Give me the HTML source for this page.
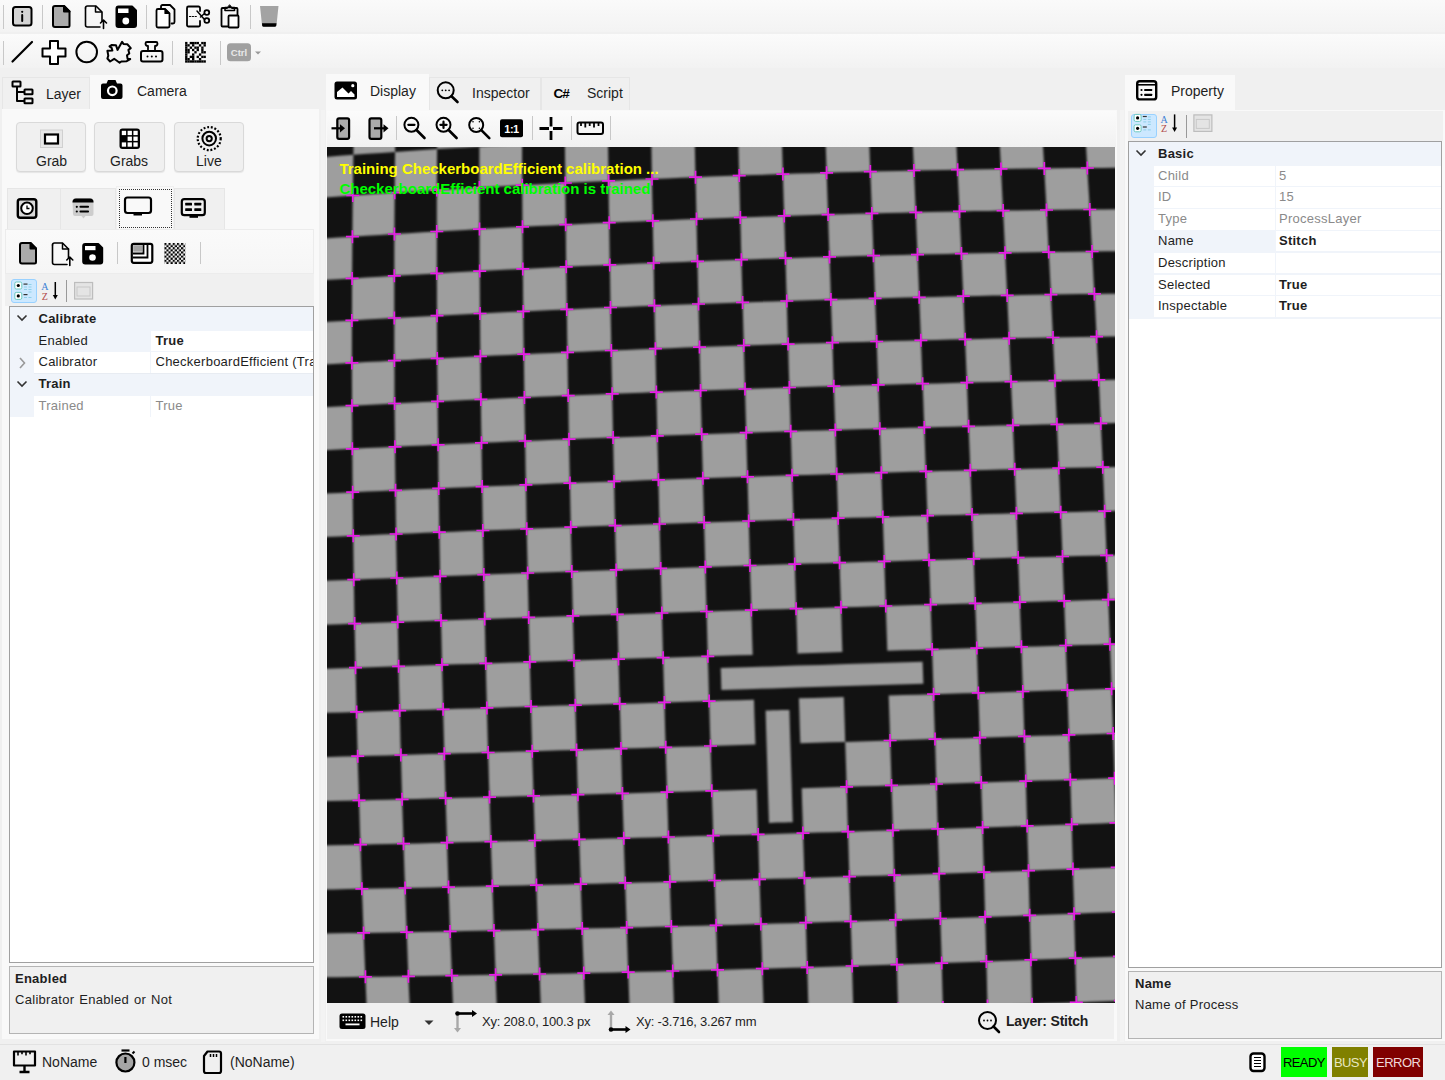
<!DOCTYPE html>
<html><head><meta charset="utf-8">
<style>
*{margin:0;padding:0;box-sizing:border-box}
html,body{width:1445px;height:1080px;overflow:hidden;background:#f0f0f0;font-family:"Liberation Sans",sans-serif;font-size:14px;color:#1e1e1e}
.a{position:absolute}
.t{position:absolute;white-space:nowrap;line-height:16px;height:16px}
.ic{position:absolute;overflow:visible}
.sep{position:absolute;width:1px;background:#c8c8c8}
.tab{position:absolute;background:#f0f0f0;border:1px solid #e6e6e6;border-bottom:none}
.tabsel{position:absolute;background:#f9f9f9;border:1px solid #ececec;border-bottom:none}
.panel{position:absolute;background:#f9f9f9}
.btn{position:absolute;background:#f0f0f0;border:1px solid #d9d9d9;border-radius:4px;box-shadow:0 1px 1px rgba(0,0,0,.08)}
.g{font-size:13px;letter-spacing:0.25px}
.row{position:absolute;left:0;width:303px;height:22px}
</style></head><body>
<!-- top toolbars -->
<div class="a" style="left:0;top:0;width:1445px;height:32px;background:linear-gradient(#fafafa,#f3f3f3)"></div>
<div class="a" style="left:0;top:34px;width:1445px;height:34px;background:linear-gradient(#fbfbfb,#f2f2f2)"></div>
<div class="sep" style="left:3px;top:5px;height:24px"></div>
<div class="sep" style="left:42px;top:5px;height:24px"></div>
<div class="sep" style="left:146px;top:5px;height:24px"></div>
<div class="sep" style="left:250px;top:5px;height:24px"></div>
<div class="sep" style="left:3px;top:41px;height:24px"></div>
<div class="sep" style="left:172px;top:41px;height:24px"></div>
<div class="sep" style="left:220px;top:41px;height:24px"></div>
<!--TOPICONS-->

<!-- left panel -->
<div class="tab" style="left:2px;top:77px;width:88px;height:33px"></div>
<div class="tabsel" style="left:90px;top:75px;width:110px;height:35px;border-color:#f9f9f9"></div>
<div class="panel" style="left:2px;top:109px;width:317px;height:930px"></div>
<div class="t" style="left:46px;top:86px">Layer</div>
<div class="t" style="left:137px;top:83px">Camera</div>
<div class="btn" style="left:16px;top:122px;width:70px;height:50px"></div>
<div class="btn" style="left:94px;top:122px;width:71px;height:50px"></div>
<div class="btn" style="left:174px;top:122px;width:70px;height:50px"></div>
<div class="t" style="left:36px;top:153px">Grab</div>
<div class="t" style="left:110px;top:153px">Grabs</div>
<div class="t" style="left:196px;top:153px">Live</div>
<div class="tab" style="left:7px;top:188px;width:54px;height:42px"></div>
<div class="tab" style="left:60px;top:188px;width:56px;height:42px"></div>
<div class="tabsel" style="left:116px;top:186px;width:58px;height:44px;border-color:#f0f0f0"></div>
<div class="a" style="left:119px;top:189px;width:53px;height:39px;border:1px dotted #333"></div>
<div class="tab" style="left:174px;top:188px;width:51px;height:42px"></div>
<div class="a" style="left:5px;top:229px;width:309px;height:45px;background:linear-gradient(#fafafa,#f6f6f6);border:1px solid #ececec"></div>
<div class="a" style="left:5px;top:274px;width:309px;height:32px;background:#f0f0f0"></div>
<div class="sep" style="left:117px;top:242px;height:22px"></div>
<div class="sep" style="left:200px;top:242px;height:22px"></div>
<div class="sep" style="left:66px;top:280px;height:22px;background:#999"></div>
<div class="a" style="left:11px;top:279px;width:26px;height:24px;background:#cce8ff;border:1px solid #99d1ff;border-radius:3px"></div>
<!-- grid -->
<div class="a" style="left:9px;top:306px;width:305px;height:657px;background:#fff;border:1px solid #a0a0a0;overflow:hidden">
  <div class="a" style="left:0;top:0;width:303px;height:110px;background:#f0f4fa"></div>
  <div class="a" style="left:141px;top:23.5px;width:162px;height:20px;background:#fff"></div>
  <div class="a" style="left:24px;top:45.3px;width:116px;height:20.6px;background:#fff"></div>
  <div class="a" style="left:141px;top:45.3px;width:162px;height:20.6px;background:#fff"></div>
  <div class="a" style="left:24px;top:89px;width:116px;height:20.5px;background:#fff"></div>
  <div class="a" style="left:141px;top:89px;width:162px;height:20.5px;background:#fff"></div>
  <div class="a" style="left:24px;top:66.2px;width:279px;height:1px;background:#e8ecf2"></div>
  <div class="t g" style="left:28.5px;top:3.8px;font-weight:bold">Calibrate</div>
  <div class="t g" style="left:28.5px;top:25.6px">Enabled</div>
  <div class="t g" style="left:145.5px;top:25.6px;font-weight:bold">True</div>
  <div class="t g" style="left:28.5px;top:47.4px">Calibrator</div>
  <div class="t g" style="left:145.5px;top:47.4px;width:157px;overflow:hidden">CheckerboardEfficient (Trained)</div>
  <div class="t g" style="left:28.5px;top:69.2px;font-weight:bold">Train</div>
  <div class="t g" style="left:28.5px;top:91px;color:#8a8a8a">Trained</div>
  <div class="t g" style="left:145.5px;top:91px;color:#8a8a8a">True</div>
  <svg class="ic" style="left:6px;top:6px" width="12" height="10"><path d="M1.5 2.5l4.5 4.5 4.5-4.5" stroke="#333" stroke-width="1.6" fill="none"/></svg>
  <svg class="ic" style="left:6px;top:71.5px" width="12" height="10"><path d="M1.5 2.5l4.5 4.5 4.5-4.5" stroke="#333" stroke-width="1.6" fill="none"/></svg>
  <svg class="ic" style="left:8px;top:49px" width="10" height="14"><path d="M2 2l4.5 5-4.5 5" stroke="#999" stroke-width="1.6" fill="none"/></svg>
</div>
<div class="a" style="left:9px;top:966px;width:305px;height:68px;background:#f0f0f0;border:1px solid #b4b4b4"></div>
<div class="t g" style="left:15px;top:971px;font-weight:bold">Enabled</div>
<div class="t g" style="left:15px;top:992px;letter-spacing:0.3px;word-spacing:1px">Calibrator Enabled or Not</div>

<!-- center panel -->
<div class="tabsel" style="left:326px;top:74px;width:103px;height:36px;border-color:#f9f9f9"></div>
<div class="tab" style="left:429px;top:77px;width:112px;height:33px"></div>
<div class="tab" style="left:541px;top:77px;width:89px;height:33px"></div>
<div class="panel" style="left:326px;top:110px;width:791px;height:931px"></div>
<div class="a" style="left:327px;top:111px;width:789px;height:36px;background:linear-gradient(#fbfbfb,#f1f1f1)"></div>
<div class="t" style="left:370px;top:83px">Display</div>
<div class="t" style="left:472px;top:85px">Inspector</div>
<div class="t" style="left:587px;top:85px">Script</div>
<div class="sep" style="left:396px;top:116px;height:24px"></div>
<div class="sep" style="left:532px;top:116px;height:24px"></div>
<div class="sep" style="left:571px;top:116px;height:24px"></div>
<div class="sep" style="left:610px;top:116px;height:24px"></div>
<div class="a" style="left:327px;top:1003px;width:787px;height:36px;background:#f0f0f0"></div>
<div class="t" style="left:370px;top:1014px">Help</div>
<div class="t g" style="left:482px;top:1014px;letter-spacing:-0.2px">Xy: 208.0, 100.3 px</div>
<div class="t g" style="left:636px;top:1014px;letter-spacing:-0.2px">Xy: -3.716, 3.267 mm</div>
<div class="t" style="left:1006px;top:1013px;font-weight:bold;letter-spacing:-0.2px">Layer: Stitch</div>

<!-- right panel -->
<div class="tabsel" style="left:1125px;top:75px;width:110px;height:35px;border-color:#f9f9f9"></div>
<div class="panel" style="left:1125px;top:110px;width:320px;height:931px"></div>
<div class="t" style="left:1171px;top:83px">Property</div>
<div class="a" style="left:1128px;top:111px;width:315px;height:30px;background:#f0f0f0"></div>
<div class="a" style="left:1131px;top:114px;width:26px;height:24px;background:#cce8ff;border:1px solid #99d1ff;border-radius:3px"></div>
<div class="sep" style="left:1186px;top:115px;height:23px;background:#999"></div>
<div class="a" style="left:1128px;top:141px;width:314px;height:827px;background:#fff;border:1px solid #a0a0a0;overflow:hidden">
  <div class="a" style="left:0;top:0;width:312px;height:177px;background:#f0f4fa"></div>
  <div class="a" style="left:24.5px;top:23.5px;width:121px;height:20.6px;background:#fff"></div>
  <div class="a" style="left:146.5px;top:23.5px;width:166px;height:20.6px;background:#fff"></div>
  <div class="t g" style="left:29px;top:25.6px;color:#8a8a8a">Child</div>
  <div class="t g" style="left:150px;top:25.6px;color:#8a8a8a;">5</div>
  <div class="a" style="left:24.5px;top:45.3px;width:121px;height:20.6px;background:#fff"></div>
  <div class="a" style="left:146.5px;top:45.3px;width:166px;height:20.6px;background:#fff"></div>
  <div class="t g" style="left:29px;top:47.4px;color:#8a8a8a">ID</div>
  <div class="t g" style="left:150px;top:47.4px;color:#8a8a8a;">15</div>
  <div class="a" style="left:24.5px;top:67.1px;width:121px;height:20.6px;background:#fff"></div>
  <div class="a" style="left:146.5px;top:67.1px;width:166px;height:20.6px;background:#fff"></div>
  <div class="t g" style="left:29px;top:69.2px;color:#8a8a8a">Type</div>
  <div class="t g" style="left:150px;top:69.2px;color:#8a8a8a;">ProcessLayer</div>
  <div class="a" style="left:146.5px;top:88.9px;width:166px;height:20.6px;background:#fff"></div>
  <div class="t g" style="left:29px;top:91.0px;color:#1e1e1e">Name</div>
  <div class="t g" style="left:150px;top:91.0px;color:#1e1e1e;font-weight:bold">Stitch</div>
  <div class="a" style="left:24.5px;top:110.7px;width:121px;height:20.6px;background:#fff"></div>
  <div class="a" style="left:146.5px;top:110.7px;width:166px;height:20.6px;background:#fff"></div>
  <div class="t g" style="left:29px;top:112.8px;color:#1e1e1e">Description</div>
  <div class="a" style="left:24.5px;top:132.5px;width:121px;height:20.6px;background:#fff"></div>
  <div class="a" style="left:146.5px;top:132.5px;width:166px;height:20.6px;background:#fff"></div>
  <div class="t g" style="left:29px;top:134.6px;color:#1e1e1e">Selected</div>
  <div class="t g" style="left:150px;top:134.6px;color:#1e1e1e;font-weight:bold">True</div>
  <div class="a" style="left:24.5px;top:154.3px;width:121px;height:20.6px;background:#fff"></div>
  <div class="a" style="left:146.5px;top:154.3px;width:166px;height:20.6px;background:#fff"></div>
  <div class="t g" style="left:29px;top:156.4px;color:#1e1e1e">Inspectable</div>
  <div class="t g" style="left:150px;top:156.4px;color:#1e1e1e;font-weight:bold">True</div>
  <div class="t g" style="left:29px;top:3.8px;font-weight:bold">Basic</div>
  <svg class="ic" style="left:6px;top:6px" width="12" height="10"><path d="M1.5 2.5l4.5 4.5 4.5-4.5" stroke="#333" stroke-width="1.6" fill="none"/></svg>
</div>
<div class="a" style="left:1128px;top:971px;width:314px;height:68px;background:#f0f0f0;border:1px solid #b4b4b4"></div>
<div class="t g" style="left:1135px;top:976px;font-weight:bold">Name</div>
<div class="t g" style="left:1135px;top:997px">Name of Process</div>

<!-- bottom status -->
<div class="a" style="left:0;top:1043.5px;width:1445px;height:1px;background:#e2e2e2"></div>
<div class="a" style="left:1119.5px;top:110px;width:4px;height:932px;background:#f3f3f3"></div>
<div class="a" style="left:321px;top:110px;width:4px;height:932px;background:#f3f3f3"></div>
<div class="t" style="left:42px;top:1054px">NoName</div>
<div class="t" style="left:142px;top:1054px">0 msec</div>
<div class="t" style="left:230px;top:1054px">(NoName)</div>
<div class="a" style="left:1281px;top:1047px;width:46px;height:30px;background:#00ff00"></div>
<div class="a" style="left:1332px;top:1047px;width:36px;height:30px;background:#808000"></div>
<div class="a" style="left:1373px;top:1047px;width:50px;height:30px;background:#800000"></div>
<div class="t g" style="left:1283px;top:1055px;color:#000;letter-spacing:-0.6px">READY</div>
<div class="t g" style="left:1334px;top:1055px;color:#e8e8c0;letter-spacing:-0.6px">BUSY</div>
<div class="t g" style="left:1376px;top:1055px;color:#f0d8d8;letter-spacing:-0.5px">ERROR</div>

<svg width="788" height="856" viewBox="0 0 788 856" style="position:absolute;left:327px;top:147px;display:block">
<defs><filter id="bl" x="-2%" y="-2%" width="104%" height="104%"><feGaussianBlur stdDeviation="0.8"/></filter><clipPath id="cp"><rect width="788" height="856"/></clipPath></defs>
<rect width="788" height="856" fill="#121212"/>
<g filter="url(#bl)" clip-path="url(#cp)">
<g fill="#9e9e9e"><polygon points="-54.5,-25.7 -41.1,-26.9 -27.5,-28.0 -13.9,-29.1 -14.3,-15.8 -14.6,-2.5 -14.9,10.9 -28.5,12.0 -42.1,13.1 -55.7,14.2 -55.3,0.8 -55.0,-12.5"/><polygon points="27.1,-32.3 40.9,-33.4 54.7,-34.4 68.6,-35.4 68.4,-22.0 68.2,-8.6 68.1,4.9 54.1,5.9 40.2,6.8 26.4,7.8 26.6,-5.6 26.9,-19.0"/><polygon points="110.4,-38.3 124.4,-39.2 138.5,-40.1 152.6,-41.0 152.5,-27.5 152.5,-14.0 152.4,-0.5 138.3,0.4 124.2,1.2 110.1,2.1 110.2,-11.4 110.3,-24.9"/><polygon points="195.0,-43.5 209.2,-44.3 223.4,-45.1 237.7,-45.9 237.8,-32.4 237.8,-18.8 237.9,-5.2 223.6,-4.5 209.3,-3.7 195.1,-2.9 195.0,-16.5 195.0,-30.0"/><polygon points="280.6,-48.0 294.9,-48.7 309.3,-49.4 323.6,-50.1 323.8,-36.5 324.0,-22.9 324.3,-9.3 309.8,-8.7 295.4,-8.0 281.0,-7.3 280.9,-21.0 280.7,-34.5"/><polygon points="366.8,-51.9 381.2,-52.5 395.7,-53.0 410.1,-53.6 410.4,-40.0 410.8,-26.4 411.1,-12.8 396.6,-12.2 382.1,-11.7 367.7,-11.1 367.4,-24.8 367.1,-38.4"/><polygon points="453.4,-55.1 467.9,-55.5 482.3,-56.0 496.8,-56.4 497.3,-42.9 497.7,-29.3 498.2,-15.6 483.7,-15.2 469.2,-14.7 454.7,-14.3 454.2,-27.9 453.8,-41.5"/><polygon points="540.1,-57.5 554.6,-57.9 569.0,-58.2 583.4,-58.5 584.0,-45.0 584.6,-31.4 585.2,-17.8 570.7,-17.4 556.2,-17.1 541.7,-16.8 541.2,-30.4 540.7,-44.0"/><polygon points="626.6,-59.3 641.0,-59.5 655.3,-59.7 669.7,-59.9 670.4,-46.4 671.1,-32.9 671.8,-19.3 657.4,-19.1 643.0,-18.8 628.6,-18.6 627.9,-32.2 627.3,-45.8"/><polygon points="712.6,-60.3 726.8,-60.4 741.0,-60.5 755.2,-60.6 756.1,-47.1 757.0,-33.6 757.8,-20.1 743.5,-20.0 729.3,-19.9 714.9,-19.8 714.1,-33.3 713.4,-46.9"/><polygon points="797.7,-60.6 811.8,-60.6 825.8,-60.5 839.8,-60.5 840.8,-47.1 841.8,-33.7 842.8,-20.2 828.7,-20.2 814.6,-20.2 800.5,-20.2 799.5,-33.7 798.6,-47.2"/><polygon points="-14.9,10.9 -1.2,9.9 12.6,8.8 26.4,7.8 26.2,21.3 26.0,34.9 25.8,48.5 11.9,49.5 -1.9,50.5 -15.7,51.5 -15.4,37.9 -15.2,24.4"/><polygon points="68.1,4.9 82.0,4.0 96.0,3.0 110.1,2.1 110.0,15.7 109.9,29.4 109.9,43.1 95.8,43.9 81.7,44.8 67.7,45.7 67.8,32.1 67.9,18.4"/><polygon points="152.4,-0.5 166.6,-1.3 180.8,-2.1 195.1,-2.9 195.1,10.7 195.2,24.4 195.2,38.2 180.9,39.0 166.7,39.8 152.4,40.6 152.4,26.8 152.4,13.1"/><polygon points="237.9,-5.2 252.3,-5.9 266.6,-6.6 281.0,-7.3 281.2,6.4 281.4,20.1 281.6,33.9 267.1,34.6 252.7,35.3 238.3,36.0 238.2,22.2 238.0,8.5"/><polygon points="324.3,-9.3 338.7,-9.9 353.2,-10.5 367.7,-11.1 367.9,2.6 368.2,16.4 368.5,30.2 354.0,30.8 339.5,31.4 325.0,32.0 324.7,18.2 324.5,4.4"/><polygon points="411.1,-12.8 425.6,-13.3 440.1,-13.8 454.7,-14.3 455.1,-0.5 455.5,13.3 455.9,27.1 441.3,27.6 426.8,28.1 412.2,28.6 411.8,14.7 411.5,1.0"/><polygon points="498.2,-15.6 512.7,-16.0 527.2,-16.4 541.7,-16.8 542.3,-3.0 542.8,10.7 543.3,24.6 528.8,24.9 514.2,25.3 499.6,25.8 499.2,11.9 498.7,-1.9"/><polygon points="585.2,-17.8 599.7,-18.1 614.1,-18.3 628.6,-18.6 629.3,-4.9 629.9,8.8 630.6,22.7 616.1,22.9 601.5,23.2 587.0,23.5 586.4,9.7 585.8,-4.1"/><polygon points="671.8,-19.3 686.2,-19.4 700.6,-19.6 714.9,-19.8 715.7,-6.1 716.5,7.6 717.3,21.4 702.9,21.5 688.4,21.7 674.0,21.9 673.3,8.1 672.6,-5.6"/><polygon points="757.8,-20.1 772.1,-20.1 786.3,-20.2 800.5,-20.2 801.4,-6.6 802.3,7.0 803.1,20.7 788.9,20.8 774.6,20.9 760.3,21.0 759.5,7.2 758.7,-6.5"/><polygon points="-56.7,54.6 -43.0,53.5 -29.4,52.5 -15.7,51.5 -15.9,65.1 -16.1,78.8 -16.3,92.5 -30.0,93.5 -43.8,94.5 -57.5,95.5 -57.2,81.8 -56.9,68.1"/><polygon points="25.8,48.5 39.7,47.6 53.7,46.6 67.7,45.7 67.6,59.4 67.5,73.2 67.4,87.0 53.3,87.9 39.3,88.8 25.4,89.7 25.5,75.9 25.6,62.2"/><polygon points="109.9,43.1 124.0,42.2 138.2,41.4 152.4,40.6 152.4,54.3 152.5,68.2 152.5,82.1 138.2,82.9 124.0,83.7 109.8,84.5 109.8,70.6 109.8,56.8"/><polygon points="195.2,38.2 209.6,37.4 223.9,36.7 238.3,36.0 238.4,49.8 238.6,63.7 238.7,77.7 224.3,78.4 209.9,79.1 195.5,79.8 195.4,65.9 195.3,52.0"/><polygon points="281.6,33.9 296.0,33.3 310.5,32.6 325.0,32.0 325.2,45.9 325.5,59.8 325.8,73.8 311.2,74.4 296.7,75.0 282.2,75.7 281.9,61.7 281.7,47.8"/><polygon points="368.5,30.2 383.1,29.6 397.6,29.1 412.2,28.6 412.6,42.5 412.9,56.4 413.3,70.4 398.7,70.9 384.1,71.5 369.5,72.0 369.2,58.0 368.9,44.1"/><polygon points="455.9,27.1 470.5,26.6 485.1,26.2 499.6,25.8 500.1,39.6 500.6,53.6 501.1,67.6 486.4,68.0 471.8,68.5 457.2,68.9 456.7,54.9 456.3,41.0"/><polygon points="543.3,24.6 557.9,24.2 572.5,23.9 587.0,23.5 587.6,37.4 588.2,51.3 588.8,65.3 574.2,65.7 559.6,66.0 544.9,66.4 544.4,52.4 543.9,38.5"/><polygon points="630.6,22.7 645.1,22.4 659.5,22.2 674.0,21.9 674.7,35.8 675.4,49.7 676.1,63.6 661.6,63.9 647.0,64.1 632.5,64.4 631.9,50.4 631.2,36.5"/><polygon points="717.3,21.4 731.6,21.2 746.0,21.1 760.3,21.0 761.1,34.7 762.0,48.6 762.8,62.5 748.4,62.6 734.0,62.8 719.5,63.0 718.8,49.1 718.0,35.2"/><polygon points="803.1,20.7 817.3,20.7 831.5,20.6 845.7,20.6 846.6,34.4 847.5,48.1 848.4,62.0 834.2,62.0 820.0,62.1 805.7,62.1 804.9,48.3 804.0,34.5"/><polygon points="-16.3,92.5 -2.4,91.6 11.4,90.6 25.4,89.7 25.3,103.5 25.2,117.4 25.1,131.4 11.1,132.2 -2.8,133.1 -16.7,134.0 -16.6,120.1 -16.4,106.3"/><polygon points="67.4,87.0 81.5,86.2 95.6,85.3 109.8,84.5 109.8,98.4 109.8,112.4 109.8,126.4 95.6,127.2 81.4,128.0 67.3,128.8 67.3,114.8 67.3,100.9"/><polygon points="152.5,82.1 166.8,81.3 181.1,80.6 195.5,79.8 195.6,93.8 195.7,107.8 195.8,121.9 181.4,122.6 167.0,123.3 152.7,124.1 152.6,110.0 152.6,96.0"/><polygon points="238.7,77.7 253.2,77.0 267.7,76.3 282.2,75.7 282.4,89.7 282.6,103.7 282.8,117.9 268.3,118.5 253.7,119.1 239.2,119.8 239.0,105.7 238.9,91.7"/><polygon points="325.8,73.8 340.3,73.2 354.9,72.6 369.5,72.0 369.8,86.1 370.1,100.2 370.5,114.3 355.8,114.9 341.2,115.4 326.6,116.0 326.3,101.9 326.0,87.8"/><polygon points="413.3,70.4 427.9,69.9 442.5,69.4 457.2,68.9 457.6,83.0 458.0,97.1 458.5,111.2 443.8,111.7 429.1,112.2 414.4,112.7 414.0,98.6 413.7,84.5"/><polygon points="501.1,67.6 515.7,67.2 530.3,66.8 544.9,66.4 545.5,80.4 546.0,94.5 546.5,108.7 531.9,109.1 517.2,109.5 502.5,109.9 502.0,95.8 501.5,81.6"/><polygon points="588.8,65.3 603.4,65.0 617.9,64.7 632.5,64.4 633.1,78.4 633.8,92.5 634.4,106.6 619.8,106.9 605.1,107.2 590.5,107.6 589.9,93.4 589.3,79.4"/><polygon points="676.1,63.6 690.6,63.4 705.1,63.2 719.5,63.0 720.3,77.0 721.0,91.0 721.7,105.1 707.2,105.3 692.7,105.5 678.1,105.8 677.5,91.7 676.8,77.6"/><polygon points="762.8,62.5 777.1,62.4 791.4,62.2 805.7,62.1 806.6,76.1 807.4,90.0 808.3,104.1 793.9,104.2 779.5,104.3 765.1,104.5 764.3,90.4 763.6,76.4"/><polygon points="-58.1,136.8 -44.4,135.9 -30.6,135.0 -16.7,134.0 -16.8,148.0 -16.9,162.0 -17.0,176.0 -30.9,176.8 -44.8,177.7 -58.5,178.6 -58.4,164.6 -58.3,150.7"/><polygon points="25.1,131.4 39.1,130.5 53.2,129.7 67.3,128.8 67.3,142.8 67.3,156.9 67.3,171.0 53.1,171.8 39.0,172.6 24.9,173.4 25.0,159.4 25.0,145.3"/><polygon points="109.8,126.4 124.1,125.6 138.4,124.8 152.7,124.1 152.8,138.2 152.9,152.3 153.0,166.5 138.6,167.2 124.3,167.9 110.0,168.7 109.9,154.5 109.9,140.4"/><polygon points="195.8,121.9 210.3,121.2 224.7,120.5 239.2,119.8 239.4,134.0 239.6,148.1 239.8,162.4 225.3,163.0 210.8,163.7 196.3,164.4 196.1,150.2 196.0,136.0"/><polygon points="282.8,117.9 297.4,117.2 312.0,116.6 326.6,116.0 326.9,130.2 327.1,144.4 327.4,158.7 312.8,159.3 298.2,159.9 283.5,160.5 283.3,146.2 283.1,132.0"/><polygon points="370.5,114.3 385.1,113.8 399.8,113.2 414.4,112.7 414.8,126.9 415.2,141.2 415.6,155.4 400.9,155.9 386.2,156.5 371.5,157.0 371.1,142.7 370.8,128.5"/><polygon points="458.5,111.2 473.1,110.8 487.8,110.3 502.5,109.9 503.0,124.1 503.5,138.3 503.9,152.6 489.2,153.1 474.5,153.5 459.8,154.0 459.3,139.7 458.9,125.4"/><polygon points="546.5,108.7 561.2,108.3 575.9,107.9 590.5,107.6 591.1,121.8 591.7,136.0 592.2,150.3 577.5,150.6 562.8,151.0 548.1,151.4 547.6,137.1 547.1,122.9"/><polygon points="634.4,106.6 649.0,106.3 663.6,106.0 678.1,105.8 678.8,119.9 679.5,134.1 680.2,148.4 665.5,148.6 650.9,148.9 636.3,149.2 635.6,135.0 635.0,120.8"/><polygon points="721.7,105.1 736.2,104.9 750.7,104.7 765.1,104.5 765.9,118.6 766.6,132.7 767.4,146.9 752.9,147.1 738.4,147.3 723.9,147.6 723.2,133.4 722.5,119.2"/><polygon points="808.3,104.1 822.6,103.9 836.9,103.8 851.1,103.8 852.0,117.8 852.8,131.9 853.7,146.0 839.4,146.1 825.1,146.2 810.7,146.4 809.9,132.2 809.1,118.1"/><polygon points="-17.0,176.0 -3.1,175.1 10.9,174.3 24.9,173.4 24.9,187.6 24.9,201.7 24.9,215.9 10.8,216.7 -3.2,217.5 -17.2,218.3 -17.1,204.2 -17.1,190.0"/><polygon points="67.3,171.0 81.5,170.2 95.7,169.5 110.0,168.7 110.0,182.9 110.1,197.1 110.2,211.4 95.9,212.1 81.6,212.9 67.4,213.6 67.3,199.4 67.3,185.2"/><polygon points="153.0,166.5 167.4,165.8 181.8,165.1 196.3,164.4 196.4,178.6 196.6,192.9 196.8,207.2 182.3,207.9 167.8,208.6 153.4,209.3 153.2,195.0 153.1,180.7"/><polygon points="239.8,162.4 254.4,161.7 268.9,161.1 283.5,160.5 283.8,174.8 284.1,189.1 284.3,203.5 269.7,204.1 255.1,204.7 240.5,205.3 240.2,191.0 240.0,176.6"/><polygon points="327.4,158.7 342.1,158.1 356.8,157.6 371.5,157.0 371.8,171.3 372.2,185.7 372.5,200.1 357.8,200.6 343.1,201.2 328.4,201.7 328.0,187.3 327.7,173.0"/><polygon points="415.6,155.4 430.3,154.9 445.0,154.5 459.8,154.0 460.2,168.3 460.6,182.7 461.1,197.1 446.3,197.6 431.5,198.0 416.8,198.5 416.4,184.1 416.0,169.8"/><polygon points="503.9,152.6 518.7,152.2 533.4,151.8 548.1,151.4 548.6,165.7 549.2,180.1 549.7,194.5 534.9,194.9 520.2,195.3 505.4,195.7 504.9,181.3 504.4,167.0"/><polygon points="592.2,150.3 606.9,149.9 621.6,149.6 636.3,149.2 636.9,163.5 637.5,177.9 638.1,192.3 623.4,192.6 608.7,193.0 593.9,193.3 593.4,178.9 592.8,164.6"/><polygon points="680.2,148.4 694.7,148.1 709.3,147.8 723.9,147.6 724.6,161.8 725.3,176.1 726.0,190.5 711.4,190.7 696.7,191.0 682.1,191.3 681.5,177.0 680.8,162.6"/><polygon points="767.4,146.9 781.9,146.7 796.3,146.6 810.7,146.4 811.5,160.6 812.3,174.8 813.0,189.1 798.6,189.3 784.1,189.5 769.6,189.7 768.9,175.4 768.2,161.2"/><polygon points="-58.8,220.8 -45.0,220.0 -31.1,219.1 -17.2,218.3 -17.2,232.5 -17.2,246.7 -17.2,261.0 -31.2,261.7 -45.1,262.5 -59.0,263.3 -58.9,249.1 -58.9,234.9"/><polygon points="24.9,215.9 39.0,215.1 53.2,214.4 67.4,213.6 67.5,227.9 67.5,242.2 67.6,256.5 53.4,257.2 39.2,258.0 25.0,258.7 25.0,244.4 24.9,230.1"/><polygon points="110.2,211.4 124.6,210.7 139.0,210.0 153.4,209.3 153.5,223.6 153.7,238.0 153.9,252.4 139.4,253.1 125.0,253.7 110.6,254.4 110.5,240.0 110.3,225.7"/><polygon points="196.8,207.2 211.3,206.6 225.9,205.9 240.5,205.3 240.7,219.7 240.9,234.1 241.2,248.6 226.6,249.2 212.0,249.8 197.4,250.5 197.2,236.0 197.0,221.6"/><polygon points="284.3,203.5 299.0,202.9 313.7,202.3 328.4,201.7 328.7,216.2 329.0,230.6 329.3,245.1 314.6,245.7 299.9,246.2 285.2,246.8 284.9,232.3 284.6,217.9"/><polygon points="372.5,200.1 387.3,199.6 402.0,199.0 416.8,198.5 417.2,213.0 417.6,227.5 418.0,242.0 403.2,242.5 388.4,243.0 373.6,243.5 373.2,229.0 372.9,214.5"/><polygon points="461.1,197.1 475.8,196.6 490.6,196.2 505.4,195.7 505.9,210.2 506.3,224.7 506.8,239.2 492.0,239.6 477.2,240.1 462.4,240.5 461.9,226.0 461.5,211.5"/><polygon points="549.7,194.5 564.4,194.1 579.2,193.7 593.9,193.3 594.5,207.8 595.0,222.2 595.6,236.7 580.8,237.1 566.0,237.5 551.2,237.9 550.7,223.4 550.2,208.9"/><polygon points="638.1,192.3 652.8,191.9 667.4,191.6 682.1,191.3 682.7,205.7 683.4,220.2 684.0,234.6 669.3,235.0 654.6,235.3 639.9,235.6 639.3,221.1 638.7,206.7"/><polygon points="726.0,190.5 740.5,190.2 755.1,190.0 769.6,189.7 770.3,204.1 771.1,218.5 771.8,232.9 757.2,233.2 742.6,233.4 728.0,233.7 727.3,219.3 726.6,204.9"/><polygon points="813.0,189.1 827.4,188.9 841.8,188.8 856.2,188.6 857.0,202.9 857.8,217.2 858.5,231.6 844.2,231.8 829.7,232.0 815.3,232.2 814.5,217.8 813.8,203.4"/><polygon points="-17.2,261.0 -3.2,260.2 10.9,259.5 25.0,258.7 25.1,273.1 25.2,287.4 25.3,301.8 11.1,302.5 -3.0,303.2 -17.0,304.0 -17.1,289.6 -17.2,275.3"/><polygon points="67.6,256.5 81.9,255.8 96.2,255.1 110.6,254.4 110.7,268.8 110.9,283.3 111.1,297.8 96.7,298.4 82.3,299.1 68.0,299.8 67.9,285.3 67.7,270.9"/><polygon points="153.9,252.4 168.4,251.7 182.9,251.1 197.4,250.5 197.6,264.9 197.9,279.4 198.1,294.0 183.5,294.6 169.0,295.2 154.5,295.8 154.2,281.3 154.0,266.9"/><polygon points="241.2,248.6 255.8,248.0 270.5,247.4 285.2,246.8 285.5,261.3 285.8,275.9 286.1,290.5 271.4,291.0 256.7,291.6 242.0,292.2 241.7,277.6 241.5,263.1"/><polygon points="329.3,245.1 344.1,244.6 358.8,244.0 373.6,243.5 374.0,258.1 374.4,272.6 374.7,287.2 359.9,287.8 345.1,288.3 330.3,288.8 330.0,274.2 329.7,259.7"/><polygon points="418.0,242.0 432.8,241.5 447.6,241.0 462.4,240.5 462.8,255.1 463.3,269.7 463.7,284.3 448.9,284.8 434.0,285.3 419.2,285.7 418.8,271.1 418.4,256.5"/><polygon points="506.8,239.2 521.6,238.7 536.4,238.3 551.2,237.9 551.8,252.5 552.3,267.0 552.8,281.7 537.9,282.1 523.1,282.5 508.3,282.9 507.8,268.3 507.3,253.7"/><polygon points="595.6,236.7 610.4,236.4 625.1,236.0 639.9,235.6 640.5,250.2 641.0,264.7 641.6,279.3 626.8,279.7 612.1,280.1 597.3,280.4 596.7,265.8 596.2,251.3"/><polygon points="684.0,234.6 698.7,234.3 713.4,234.0 728.0,233.7 728.6,248.2 729.3,262.7 729.9,277.3 715.3,277.6 700.6,277.9 685.9,278.3 685.3,263.7 684.6,249.1"/><polygon points="771.8,232.9 786.3,232.7 800.8,232.4 815.3,232.2 816.0,246.6 816.7,261.1 817.5,275.6 802.9,275.9 788.4,276.1 773.8,276.4 773.1,261.9 772.5,247.4"/><polygon points="-58.9,306.2 -45.0,305.4 -31.1,304.7 -17.0,304.0 -17.0,318.3 -16.9,332.8 -16.8,347.2 -30.8,347.9 -44.8,348.6 -58.7,349.3 -58.8,334.9 -58.9,320.5"/><polygon points="25.3,301.8 39.5,301.1 53.7,300.4 68.0,299.8 68.1,314.2 68.3,328.7 68.5,343.3 54.2,343.9 39.9,344.6 25.7,345.2 25.5,330.7 25.4,316.3"/><polygon points="111.1,297.8 125.5,297.1 140.0,296.5 154.5,295.8 154.7,310.4 154.9,325.0 155.1,339.6 140.6,340.2 126.1,340.8 111.7,341.4 111.4,326.8 111.3,312.3"/><polygon points="198.1,294.0 212.7,293.4 227.3,292.8 242.0,292.2 242.3,306.8 242.6,321.4 242.9,336.1 228.2,336.6 213.5,337.2 198.9,337.8 198.6,323.2 198.4,308.6"/><polygon points="286.1,290.5 300.8,289.9 315.6,289.4 330.3,288.8 330.7,303.5 331.1,318.1 331.4,332.8 316.6,333.3 301.8,333.9 287.1,334.4 286.7,319.7 286.4,305.1"/><polygon points="374.7,287.2 389.5,286.7 404.4,286.2 419.2,285.7 419.6,300.4 420.0,315.1 420.5,329.8 405.6,330.3 390.7,330.7 375.9,331.3 375.5,316.6 375.1,301.9"/><polygon points="463.7,284.3 478.6,283.8 493.4,283.4 508.3,282.9 508.7,297.6 509.2,312.3 509.7,327.0 494.8,327.4 479.9,327.9 465.1,328.3 464.6,313.6 464.2,299.0"/><polygon points="552.8,281.7 567.6,281.2 582.4,280.8 597.3,280.4 597.8,295.1 598.3,309.7 598.9,324.4 584.0,324.8 569.2,325.3 554.3,325.7 553.8,311.0 553.3,296.3"/><polygon points="641.6,279.3 656.4,279.0 671.1,278.6 685.9,278.3 686.5,292.9 687.1,307.5 687.7,322.2 672.9,322.5 658.1,322.9 643.3,323.3 642.8,308.6 642.2,293.9"/><polygon points="729.9,277.3 744.6,277.0 759.2,276.7 773.8,276.4 774.5,291.0 775.2,305.5 775.8,320.2 761.2,320.5 746.5,320.8 731.8,321.1 731.2,306.5 730.6,291.9"/><polygon points="817.5,275.6 831.9,275.3 846.4,275.1 860.8,274.9 861.5,289.4 862.3,303.9 863.0,318.5 848.5,318.7 834.1,319.0 819.5,319.3 818.9,304.7 818.2,290.1"/><polygon points="-16.8,347.2 -2.7,346.5 11.5,345.9 25.7,345.2 25.8,359.7 26.0,374.3 26.2,388.8 12.0,389.5 -2.2,390.1 -16.3,390.7 -16.5,376.2 -16.6,361.7"/><polygon points="68.5,343.3 82.8,342.6 97.2,342.0 111.7,341.4 111.9,356.0 112.1,370.6 112.3,385.2 97.9,385.8 83.5,386.4 69.1,387.0 68.9,372.4 68.7,357.8"/><polygon points="155.1,339.6 169.7,339.0 184.3,338.4 198.9,337.8 199.2,352.4 199.4,367.1 199.7,381.8 185.1,382.4 170.5,382.9 155.9,383.5 155.6,368.8 155.4,354.2"/><polygon points="242.9,336.1 257.6,335.5 272.3,334.9 287.1,334.4 287.4,349.1 287.7,363.8 288.1,378.6 273.3,379.1 258.6,379.6 243.8,380.2 243.5,365.4 243.2,350.7"/><polygon points="331.4,332.8 346.2,332.3 361.1,331.8 375.9,331.3 376.3,346.0 376.7,360.7 377.1,375.5 362.2,376.0 347.4,376.5 332.5,377.0 332.1,362.2 331.8,347.5"/><polygon points="420.5,329.8 435.3,329.3 450.2,328.8 465.1,328.3 465.5,343.1 466.0,357.8 466.4,372.6 451.5,373.1 436.6,373.5 421.7,374.0 421.3,359.2 420.9,344.5"/><polygon points="509.7,327.0 524.6,326.5 539.4,326.1 554.3,325.7 554.8,340.4 555.3,355.2 555.8,369.9 540.9,370.4 526.0,370.8 511.1,371.2 510.7,356.5 510.2,341.7"/><polygon points="598.9,324.4 613.7,324.0 628.5,323.7 643.3,323.3 643.9,338.0 644.5,352.7 645.0,367.5 630.2,367.9 615.3,368.3 600.5,368.7 599.9,353.9 599.4,339.2"/><polygon points="687.7,322.2 702.4,321.8 717.1,321.5 731.8,321.1 732.5,335.8 733.1,350.5 733.7,365.2 719.0,365.6 704.2,365.9 689.4,366.3 688.9,351.6 688.3,336.9"/><polygon points="775.8,320.2 790.4,319.9 805.0,319.6 819.5,319.3 820.2,333.9 820.9,348.5 821.5,363.2 807.0,363.5 792.4,363.8 777.7,364.2 777.1,349.5 776.5,334.8"/><polygon points="-58.4,392.6 -44.4,392.0 -30.4,391.3 -16.3,390.7 -16.1,405.2 -16.0,419.8 -15.7,434.4 -29.8,435.0 -43.9,435.6 -57.9,436.1 -58.1,421.6 -58.2,407.1"/><polygon points="26.2,388.8 40.4,388.2 54.7,387.6 69.1,387.0 69.3,401.6 69.6,416.3 69.8,431.0 55.4,431.5 41.1,432.1 26.8,432.7 26.6,418.0 26.4,403.4"/><polygon points="112.3,385.2 126.8,384.7 141.4,384.1 155.9,383.5 156.2,398.2 156.5,412.9 156.8,427.6 142.2,428.2 127.6,428.7 113.1,429.3 112.9,414.6 112.6,399.9"/><polygon points="199.7,381.8 214.4,381.3 229.1,380.7 243.8,380.2 244.1,394.9 244.5,409.7 244.8,424.5 230.1,425.0 215.4,425.5 200.7,426.0 200.4,411.3 200.0,396.5"/><polygon points="288.1,378.6 302.9,378.0 317.7,377.5 332.5,377.0 332.9,391.8 333.3,406.6 333.7,421.4 318.8,421.9 304.0,422.4 289.2,422.9 288.8,408.1 288.4,393.3"/><polygon points="377.1,375.5 392.0,375.0 406.8,374.5 421.7,374.0 422.2,388.8 422.6,403.6 423.0,418.5 408.1,419.0 393.2,419.4 378.3,419.9 377.9,405.1 377.5,390.3"/><polygon points="466.4,372.6 481.3,372.1 496.2,371.7 511.1,371.2 511.6,386.0 512.1,400.9 512.6,415.7 497.6,416.2 482.7,416.6 467.8,417.1 467.3,402.2 466.9,387.4"/><polygon points="555.8,369.9 570.7,369.5 585.6,369.1 600.5,368.7 601.0,383.5 601.5,398.3 602.0,413.1 587.1,413.5 572.2,414.0 557.3,414.4 556.8,399.5 556.3,384.7"/><polygon points="645.0,367.5 659.8,367.1 674.6,366.7 689.4,366.3 690.0,381.1 690.6,395.8 691.1,410.6 676.3,411.0 661.5,411.4 646.7,411.8 646.1,397.0 645.6,382.2"/><polygon points="733.7,365.2 748.4,364.9 763.1,364.5 777.7,364.2 778.4,378.9 779.0,393.6 779.6,408.4 764.9,408.7 750.2,409.1 735.5,409.5 734.9,394.7 734.3,379.9"/><polygon points="821.5,363.2 836.1,362.9 850.6,362.6 865.1,362.3 865.7,376.9 866.4,391.6 867.0,406.3 852.5,406.6 838.0,407.0 823.4,407.3 822.8,392.6 822.2,377.9"/><polygon points="-15.7,434.4 -1.6,433.8 12.6,433.2 26.8,432.7 27.1,447.3 27.3,462.0 27.6,476.6 13.4,477.2 -0.9,477.7 -15.0,478.2 -15.3,463.6 -15.5,449.0"/><polygon points="69.8,431.0 84.2,430.4 98.7,429.8 113.1,429.3 113.4,444.0 113.7,458.7 114.0,473.5 99.5,474.0 85.1,474.5 70.7,475.1 70.4,460.3 70.1,445.6"/><polygon points="156.8,427.6 171.4,427.1 186.0,426.6 200.7,426.0 201.0,440.8 201.4,455.6 201.7,470.4 187.0,470.9 172.4,471.4 157.7,472.0 157.4,457.2 157.1,442.4"/><polygon points="244.8,424.5 259.6,423.9 274.4,423.4 289.2,422.9 289.5,437.7 289.9,452.6 290.3,467.4 275.5,467.9 260.7,468.4 245.9,468.9 245.5,454.1 245.2,439.3"/><polygon points="333.7,421.4 348.5,420.9 363.4,420.4 378.3,419.9 378.7,434.8 379.1,449.6 379.6,464.5 364.6,465.0 349.7,465.5 334.9,466.0 334.5,451.1 334.1,436.2"/><polygon points="423.0,418.5 437.9,418.0 452.9,417.5 467.8,417.1 468.2,431.9 468.7,446.8 469.1,461.7 454.2,462.2 439.3,462.6 424.3,463.1 423.9,448.2 423.4,433.3"/><polygon points="512.6,415.7 527.5,415.3 542.4,414.8 557.3,414.4 557.8,429.2 558.3,444.1 558.8,459.0 543.9,459.4 528.9,459.9 514.0,460.3 513.5,445.5 513.0,430.6"/><polygon points="602.0,413.1 616.9,412.7 631.8,412.3 646.7,411.8 647.2,426.7 647.7,441.5 648.2,456.4 633.4,456.8 618.5,457.3 603.6,457.7 603.1,442.8 602.6,427.9"/><polygon points="691.1,410.6 705.9,410.3 720.7,409.9 735.5,409.5 736.0,424.3 736.6,439.1 737.2,453.9 722.4,454.3 707.6,454.7 692.8,455.2 692.2,440.3 691.7,425.5"/><polygon points="779.6,408.4 794.2,408.0 808.8,407.7 823.4,407.3 824.1,422.0 824.7,436.8 825.3,451.6 810.6,452.0 796.0,452.4 781.3,452.7 780.8,437.9 780.2,423.1"/><polygon points="-57.2,479.8 -43.2,479.3 -29.1,478.8 -15.0,478.2 -14.8,492.9 -14.5,507.5 -14.2,522.2 -28.3,522.7 -42.4,523.2 -56.4,523.7 -56.7,509.0 -57.0,494.4"/><polygon points="27.6,476.6 41.9,476.1 56.3,475.6 70.7,475.1 71.0,489.8 71.3,504.5 71.6,519.3 57.2,519.8 42.8,520.3 28.5,520.7 28.2,506.0 27.9,491.3"/><polygon points="114.0,473.5 128.6,473.0 143.1,472.5 157.7,472.0 158.1,486.7 158.4,501.6 158.8,516.4 144.2,516.9 129.6,517.3 115.0,517.8 114.7,503.0 114.4,488.3"/><polygon points="201.7,470.4 216.4,469.9 231.1,469.4 245.9,468.9 246.3,483.8 246.7,498.6 247.0,513.5 232.3,514.0 217.5,514.5 202.8,514.9 202.4,500.1 202.1,485.3"/><polygon points="290.3,467.4 305.1,466.9 320.0,466.5 334.9,466.0 335.3,480.9 335.7,495.8 336.1,510.7 321.2,511.1 306.3,511.6 291.5,512.1 291.1,497.2 290.7,482.3"/><polygon points="379.6,464.5 394.5,464.1 409.4,463.6 424.3,463.1 424.8,478.0 425.2,492.9 425.7,507.9 410.7,508.3 395.8,508.8 380.8,509.3 380.4,494.3 380.0,479.4"/><polygon points="469.1,461.7 484.1,461.3 499.0,460.8 514.0,460.3 514.5,475.3 514.9,490.2 515.4,505.1 500.4,505.6 485.5,506.0 470.5,506.5 470.1,491.5 469.6,476.6"/><polygon points="558.8,459.0 573.7,458.6 588.7,458.1 603.6,457.7 604.1,472.6 604.6,487.5 605.1,502.4 590.2,502.9 575.2,503.3 560.3,503.8 559.8,488.8 559.3,473.9"/><polygon points="648.2,456.4 663.1,456.0 678.0,455.6 692.8,455.2 693.3,470.0 693.9,484.9 694.4,499.8 679.5,500.2 664.7,500.7 649.8,501.1 649.3,486.2 648.8,471.3"/><polygon points="737.2,453.9 751.9,453.5 766.6,453.1 781.3,452.7 781.9,467.6 782.5,482.4 783.0,497.2 768.3,497.7 753.6,498.1 738.8,498.5 738.3,483.6 737.7,468.8"/><polygon points="825.3,451.6 839.8,451.2 854.4,450.8 868.9,450.5 869.5,465.2 870.1,480.0 870.7,494.8 856.1,495.2 841.6,495.6 827.0,496.0 826.4,481.2 825.8,466.4"/><polygon points="-14.2,522.2 0.0,521.7 14.2,521.2 28.5,520.7 28.9,535.5 29.2,550.2 29.6,564.9 15.3,565.4 1.0,565.8 -13.2,566.3 -13.5,551.6 -13.9,536.9"/><polygon points="71.6,519.3 86.0,518.8 100.5,518.3 115.0,517.8 115.4,532.6 115.8,547.4 116.1,562.3 101.6,562.7 87.1,563.1 72.7,563.6 72.3,548.8 71.9,534.0"/><polygon points="158.8,516.4 173.4,515.9 188.1,515.4 202.8,514.9 203.2,529.8 203.6,544.7 204.0,559.5 189.3,560.0 174.6,560.4 159.9,560.9 159.5,546.1 159.1,531.2"/><polygon points="247.0,513.5 261.8,513.0 276.7,512.6 291.5,512.1 291.9,527.0 292.3,541.9 292.7,556.8 277.9,557.3 263.1,557.7 248.3,558.2 247.8,543.3 247.4,528.4"/><polygon points="336.1,510.7 351.0,510.2 365.9,509.7 380.8,509.3 381.3,524.2 381.7,539.1 382.1,554.1 367.2,554.5 352.3,555.0 337.4,555.4 336.9,540.5 336.5,525.6"/><polygon points="605.1,502.4 620.0,502.0 634.9,501.5 649.8,501.1 650.3,516.0 650.8,530.9 651.3,545.9 636.4,546.3 621.5,546.8 606.6,547.2 606.1,532.3 605.6,517.3"/><polygon points="694.4,499.8 709.2,499.4 724.0,498.9 738.8,498.5 739.3,513.4 739.9,528.3 740.4,543.2 725.6,543.6 710.8,544.1 695.9,544.5 695.4,529.6 694.9,514.7"/><polygon points="783.0,497.2 797.7,496.8 812.4,496.4 827.0,496.0 827.5,510.8 828.1,525.7 828.6,540.5 814.0,541.0 799.3,541.4 784.6,541.8 784.1,527.0 783.6,512.1"/><polygon points="-55.5,567.6 -41.4,567.1 -27.3,566.7 -13.2,566.3 -12.8,581.0 -12.4,595.7 -12.0,610.4 -26.2,610.8 -40.3,611.1 -54.4,611.5 -54.7,596.9 -55.1,582.2"/><polygon points="29.6,564.9 43.9,564.5 58.3,564.0 72.7,563.6 73.1,578.4 73.4,593.2 73.9,608.0 59.4,608.4 45.1,608.8 30.7,609.2 30.3,594.4 29.9,579.7"/><polygon points="116.1,562.3 130.7,561.8 145.3,561.4 159.9,560.9 160.3,575.8 160.7,590.6 161.1,605.5 146.5,605.9 131.9,606.3 117.3,606.7 116.9,591.9 116.5,577.1"/><polygon points="204.0,559.5 218.7,559.1 233.5,558.6 248.3,558.2 248.7,573.1 249.1,588.0 249.5,602.9 234.7,603.3 220.0,603.8 205.2,604.2 204.8,589.3 204.4,574.4"/><polygon points="292.7,556.8 307.6,556.4 322.5,555.9 337.4,555.4 337.8,570.4 338.2,585.3 338.7,600.3 323.8,600.7 308.9,601.2 294.0,601.6 293.6,586.7 293.2,571.7"/><polygon points="382.1,554.1 397.1,553.6 412.0,553.2 427.0,552.7 427.4,567.7 427.9,582.6 428.4,597.6 413.4,598.1 398.4,598.5 383.5,599.0 383.0,584.0 382.6,569.0"/><polygon points="471.9,551.3 486.9,550.9 501.8,550.4 516.8,550.0 517.3,564.9 517.8,579.9 518.2,594.9 503.2,595.3 488.3,595.8 473.3,596.2 472.8,581.3 472.4,566.3"/><polygon points="561.7,548.6 576.7,548.1 591.6,547.7 606.6,547.2 607.0,562.2 607.5,577.1 608.0,592.1 593.1,592.6 578.1,593.0 563.1,593.5 562.7,578.5 562.2,563.6"/><polygon points="651.3,545.9 666.2,545.4 681.1,545.0 695.9,544.5 696.4,559.4 696.9,574.4 697.4,589.3 682.5,589.8 667.7,590.2 652.8,590.7 652.3,575.8 651.8,560.8"/><polygon points="740.4,543.2 755.1,542.7 769.9,542.3 784.6,541.8 785.1,556.7 785.6,571.6 786.1,586.5 771.4,587.0 756.6,587.4 741.9,587.9 741.4,573.0 740.9,558.1"/><polygon points="828.6,540.5 843.2,540.1 857.8,539.6 872.3,539.2 872.9,554.0 873.4,568.8 873.9,583.7 859.3,584.1 844.8,584.6 830.1,585.1 829.6,570.2 829.1,555.4"/><polygon points="-12.0,610.4 2.2,610.0 16.4,609.6 30.7,609.2 31.1,623.9 31.6,638.7 32.0,653.4 17.7,653.8 3.4,654.1 -10.8,654.5 -11.2,639.8 -11.6,625.1"/><polygon points="73.9,608.0 88.3,607.6 102.8,607.1 117.3,606.7 117.8,621.6 118.2,636.4 118.6,651.2 104.1,651.6 89.6,652.0 75.1,652.3 74.7,637.5 74.3,622.8"/><polygon points="161.1,605.5 175.8,605.1 190.5,604.6 205.2,604.2 205.6,619.1 206.1,634.0 206.5,648.9 191.8,649.3 177.1,649.7 162.5,650.1 162.0,635.2 161.6,620.3"/><polygon points="249.5,602.9 264.3,602.5 279.2,602.0 294.0,601.6 294.5,616.5 294.9,631.5 295.4,646.4 280.5,646.8 265.7,647.2 250.9,647.7 250.4,632.7 250.0,617.8"/><polygon points="338.7,600.3 353.6,599.8 368.5,599.4 383.5,599.0 383.9,613.9 384.4,628.9 384.8,643.8 369.9,644.3 355.0,644.7 340.0,645.1 339.6,630.2 339.1,615.2"/><polygon points="518.2,594.9 533.2,594.4 548.2,594.0 563.1,593.5 563.6,608.5 564.1,623.4 564.5,638.4 549.6,638.9 534.6,639.3 519.6,639.8 519.2,624.8 518.7,609.9"/><polygon points="608.0,592.1 622.9,591.6 637.9,591.2 652.8,590.7 653.2,605.7 653.7,620.6 654.2,635.6 639.3,636.1 624.3,636.5 609.4,637.0 608.9,622.0 608.5,607.1"/><polygon points="697.4,589.3 712.2,588.8 727.1,588.4 741.9,587.9 742.4,602.8 742.8,617.7 743.3,632.7 728.5,633.2 713.7,633.6 698.8,634.1 698.4,619.2 697.9,604.3"/><polygon points="786.1,586.5 800.8,586.0 815.5,585.6 830.1,585.1 830.6,599.9 831.1,614.8 831.6,629.7 816.9,630.2 802.3,630.7 787.6,631.2 787.1,616.3 786.6,601.4"/><polygon points="-53.1,655.5 -39.0,655.2 -24.9,654.8 -10.8,654.5 -10.3,669.2 -9.8,683.9 -9.3,698.6 -23.5,698.9 -37.6,699.2 -51.7,699.4 -52.2,684.8 -52.6,670.1"/><polygon points="32.0,653.4 46.3,653.1 60.7,652.7 75.1,652.3 75.6,667.1 76.1,681.9 76.5,696.7 62.1,697.0 47.7,697.3 33.4,697.7 32.9,682.9 32.5,668.2"/><polygon points="118.6,651.2 133.2,650.8 147.8,650.5 162.5,650.1 162.9,664.9 163.4,679.8 163.9,694.6 149.2,695.0 134.6,695.3 120.0,695.7 119.6,680.9 119.1,666.0"/><polygon points="206.5,648.9 221.3,648.5 236.1,648.1 250.9,647.7 251.3,662.6 251.8,677.5 252.2,692.4 237.5,692.8 222.7,693.2 207.9,693.5 207.5,678.7 207.0,663.8"/><polygon points="295.4,646.4 310.2,646.0 325.1,645.6 340.0,645.1 340.5,660.1 341.0,675.0 341.4,690.0 326.5,690.4 311.6,690.8 296.8,691.2 296.3,676.3 295.8,661.4"/><polygon points="384.8,643.8 399.8,643.4 414.8,643.0 429.7,642.5 430.2,657.5 430.6,672.5 431.1,687.4 416.1,687.9 401.2,688.3 386.2,688.7 385.8,673.8 385.3,658.8"/><polygon points="474.7,641.2 489.6,640.7 504.6,640.3 519.6,639.8 520.1,654.8 520.5,669.8 521.0,684.7 506.0,685.2 491.0,685.6 476.0,686.1 475.6,671.1 475.1,656.2"/><polygon points="564.5,638.4 579.5,637.9 594.5,637.5 609.4,637.0 609.9,652.0 610.3,666.9 610.8,681.9 595.8,682.4 580.9,682.8 565.9,683.3 565.5,668.4 565.0,653.4"/><polygon points="654.2,635.6 669.1,635.1 684.0,634.6 698.8,634.1 699.3,649.1 699.7,664.0 700.2,678.9 685.3,679.4 670.4,679.9 655.6,680.4 655.1,665.5 654.6,650.5"/><polygon points="743.3,632.7 758.1,632.2 772.8,631.7 787.6,631.2 788.0,646.1 788.5,661.0 788.9,675.8 774.2,676.4 759.4,676.9 744.7,677.4 744.2,662.5 743.8,647.6"/><polygon points="831.6,629.7 846.2,629.2 860.8,628.7 875.3,628.2 875.8,643.0 876.2,657.8 876.6,672.6 862.1,673.2 847.5,673.7 832.9,674.3 832.5,659.4 832.0,644.5"/><polygon points="-9.3,698.6 4.9,698.3 19.1,698.0 33.4,697.7 33.9,712.4 34.4,727.1 34.9,741.8 20.7,742.1 6.4,742.4 -7.8,742.6 -8.3,727.9 -8.8,713.3"/><polygon points="76.5,696.7 91.0,696.4 105.5,696.0 120.0,695.7 120.5,710.5 121.0,725.3 121.5,740.1 107.0,740.4 92.5,740.7 78.1,741.0 77.5,726.2 77.0,711.5"/><polygon points="163.9,694.6 178.5,694.3 193.2,693.9 207.9,693.5 208.4,708.4 208.9,723.3 209.4,738.1 194.7,738.5 180.0,738.8 165.3,739.1 164.8,724.3 164.3,709.5"/><polygon points="252.2,692.4 267.1,692.0 281.9,691.6 296.8,691.2 297.2,706.1 297.7,721.0 298.2,735.9 283.3,736.3 268.5,736.7 253.7,737.1 253.2,722.2 252.7,707.3"/><polygon points="341.4,690.0 356.4,689.6 371.3,689.1 386.2,688.7 386.7,703.7 387.2,718.6 387.6,733.5 372.7,734.0 357.8,734.4 342.9,734.8 342.4,719.9 341.9,704.9"/><polygon points="431.1,687.4 446.1,687.0 461.1,686.5 476.0,686.1 476.5,701.1 477.0,716.0 477.4,731.0 462.5,731.4 447.5,731.8 432.5,732.3 432.0,717.3 431.6,702.4"/><polygon points="521.0,684.7 536.0,684.3 550.9,683.8 565.9,683.3 566.4,698.3 566.8,713.2 567.3,728.2 552.3,728.7 537.3,729.1 522.4,729.6 521.9,714.6 521.5,699.7"/><polygon points="610.8,681.9 625.7,681.4 640.6,680.9 655.6,680.4 656.0,695.4 656.4,710.3 656.9,725.2 642.0,725.7 627.1,726.2 612.1,726.7 611.7,711.8 611.2,696.8"/><polygon points="700.2,678.9 715.0,678.4 729.9,677.9 744.7,677.4 745.1,692.3 745.5,707.2 745.9,722.1 731.1,722.6 716.3,723.1 701.5,723.7 701.1,708.8 700.6,693.8"/><polygon points="788.9,675.8 803.6,675.3 818.3,674.8 832.9,674.3 833.3,689.1 833.8,703.9 834.2,718.8 819.5,719.3 804.9,719.9 790.2,720.4 789.8,705.6 789.3,690.7"/><polygon points="-50.1,743.3 -36.0,743.1 -21.9,742.8 -7.8,742.6 -7.2,757.3 -6.7,771.9 -6.1,786.5 -20.2,786.7 -34.3,786.9 -48.4,787.1 -49.0,772.5 -49.5,757.9"/><polygon points="34.9,741.8 49.3,741.6 63.7,741.3 78.1,741.0 78.6,755.7 79.1,770.5 79.7,785.2 65.3,785.4 50.9,785.7 36.6,785.9 36.0,771.2 35.5,756.5"/><polygon points="121.5,740.1 136.1,739.8 150.7,739.5 165.3,739.1 165.9,754.0 166.4,768.8 166.9,783.6 152.3,783.8 137.7,784.1 123.1,784.4 122.6,769.7 122.1,754.9"/><polygon points="209.4,738.1 224.1,737.8 238.9,737.4 253.7,737.1 254.2,751.9 254.7,766.8 255.2,781.6 240.4,782.0 225.7,782.3 210.9,782.6 210.4,767.8 209.9,753.0"/><polygon points="298.2,735.9 313.1,735.6 328.0,735.2 342.9,734.8 343.3,749.7 343.8,764.6 344.3,779.5 329.4,779.8 314.6,780.2 299.7,780.6 299.2,765.7 298.7,750.8"/><polygon points="387.6,733.5 402.6,733.1 417.5,732.7 432.5,732.3 433.0,747.2 433.5,762.1 433.9,777.0 419.0,777.5 404.0,777.9 389.1,778.3 388.6,763.4 388.1,748.5"/><polygon points="477.4,731.0 492.4,730.5 507.4,730.1 522.4,729.6 522.8,744.5 523.3,759.5 523.7,774.4 508.7,774.8 493.8,775.3 478.8,775.7 478.4,760.8 477.9,745.9"/><polygon points="567.3,728.2 582.2,727.7 597.2,727.2 612.1,726.7 612.6,741.6 613.0,756.6 613.4,771.5 598.5,772.0 583.5,772.5 568.6,772.9 568.2,758.0 567.7,743.1"/><polygon points="656.9,725.2 671.8,724.7 686.6,724.2 701.5,723.7 701.9,738.6 702.3,753.5 702.7,768.3 687.9,768.9 673.0,769.4 658.1,769.9 657.7,755.0 657.3,740.1"/><polygon points="745.9,722.1 760.7,721.5 775.5,721.0 790.2,720.4 790.6,735.3 791.0,750.1 791.3,765.0 776.6,765.5 761.9,766.1 747.1,766.7 746.8,751.8 746.3,737.0"/><polygon points="834.2,718.8 848.8,718.2 863.3,717.6 877.9,717.1 878.2,731.9 878.6,746.6 879.0,761.4 864.4,762.0 849.9,762.6 835.3,763.2 834.9,748.4 834.6,733.6"/><polygon points="-6.1,786.5 8.1,786.3 22.3,786.1 36.6,785.9 37.2,800.6 37.8,815.2 38.4,829.8 24.1,830.0 9.9,830.2 -4.3,830.3 -4.9,815.7 -5.5,801.1"/><polygon points="79.7,785.2 94.1,784.9 108.6,784.7 123.1,784.4 123.7,799.2 124.3,813.9 124.8,828.6 110.3,828.8 95.9,829.0 81.4,829.3 80.8,814.6 80.3,799.9"/><polygon points="166.9,783.6 181.6,783.3 196.2,782.9 210.9,782.6 211.5,797.4 212.0,812.2 212.6,827.0 197.9,827.3 183.2,827.6 168.6,827.8 168.0,813.1 167.5,798.3"/><polygon points="255.2,781.6 270.0,781.3 284.8,780.9 299.7,780.6 300.2,795.4 300.7,810.3 301.2,825.1 286.4,825.4 271.6,825.8 256.8,826.1 256.3,811.3 255.7,796.5"/><polygon points="344.3,779.5 359.2,779.1 374.1,778.7 389.1,778.3 389.6,793.2 390.0,808.0 390.5,822.9 375.6,823.3 360.7,823.7 345.8,824.0 345.3,809.2 344.8,794.3"/><polygon points="433.9,777.0 448.9,776.6 463.8,776.2 478.8,775.7 479.3,790.6 479.7,805.5 480.2,820.4 465.2,820.8 450.3,821.2 435.3,821.7 434.9,806.8 434.4,791.9"/><polygon points="523.7,774.4 538.7,773.9 553.6,773.4 568.6,772.9 569.0,787.8 569.5,802.7 569.9,817.6 555.0,818.1 540.0,818.5 525.1,819.0 524.6,804.1 524.2,789.3"/><polygon points="613.4,771.5 628.3,771.0 643.2,770.4 658.1,769.9 658.6,784.8 659.0,799.7 659.4,814.5 644.5,815.0 629.6,815.6 614.7,816.1 614.3,801.2 613.8,786.3"/><polygon points="702.7,768.3 717.6,767.8 732.4,767.2 747.1,766.7 747.5,781.5 747.9,796.3 748.3,811.1 733.5,811.7 718.7,812.3 703.9,812.8 703.5,798.0 703.1,783.2"/><polygon points="791.3,765.0 806.0,764.4 820.7,763.8 835.3,763.2 835.7,778.0 836.0,792.8 836.3,807.5 821.7,808.1 807.1,808.7 792.4,809.4 792.1,794.6 791.7,779.8"/><polygon points="-46.5,830.7 -32.5,830.6 -18.4,830.5 -4.3,830.3 -3.6,844.9 -3.0,859.4 -2.3,873.9 -16.4,874.0 -30.5,874.1 -44.5,874.2 -45.2,859.7 -45.8,845.2"/><polygon points="38.4,829.8 52.7,829.7 67.0,829.5 81.4,829.3 82.0,843.9 82.7,858.5 83.3,873.1 68.9,873.3 54.6,873.5 40.3,873.6 39.6,859.0 39.0,844.4"/><polygon points="124.8,828.6 139.4,828.3 154.0,828.1 168.6,827.8 169.1,842.6 169.7,857.3 170.3,871.9 155.7,872.2 141.2,872.4 126.6,872.6 126.0,857.9 125.4,843.3"/><polygon points="212.6,827.0 227.3,826.7 242.0,826.4 256.8,826.1 257.3,840.9 257.9,855.6 258.4,870.4 243.7,870.7 229.0,870.9 214.3,871.2 213.7,856.5 213.1,841.8"/><polygon points="301.2,825.1 316.1,824.8 330.9,824.4 345.8,824.0 346.3,838.9 346.8,853.7 347.4,868.4 332.5,868.8 317.6,869.1 302.8,869.4 302.3,854.7 301.8,839.9"/><polygon points="390.5,822.9 405.5,822.5 420.4,822.1 435.3,821.7 435.8,836.5 436.3,851.3 436.8,866.1 421.8,866.5 406.9,866.9 392.0,867.3 391.5,852.5 391.0,837.7"/><polygon points="480.2,820.4 495.1,819.9 510.1,819.5 525.1,819.0 525.5,833.9 525.9,848.7 526.4,863.5 511.4,864.0 496.5,864.4 481.6,864.9 481.1,850.0 480.7,835.2"/><polygon points="569.9,817.6 584.8,817.1 599.8,816.6 614.7,816.1 615.1,830.9 615.5,845.7 615.9,860.5 601.0,861.0 586.1,861.5 571.2,862.0 570.7,847.2 570.3,832.4"/><polygon points="659.4,814.5 674.2,814.0 689.1,813.4 703.9,812.8 704.3,827.7 704.6,842.4 705.0,857.2 690.2,857.8 675.4,858.3 660.5,858.9 660.1,844.1 659.8,829.3"/><polygon points="748.3,811.1 763.0,810.6 777.7,810.0 792.4,809.4 792.8,824.1 793.1,838.9 793.4,853.6 778.7,854.2 764.0,854.8 749.3,855.4 749.0,840.7 748.6,825.9"/><polygon points="836.3,807.5 850.9,806.9 865.4,806.2 880.0,805.6 880.3,820.3 880.5,835.0 880.8,849.6 866.3,850.3 851.8,851.0 837.3,851.6 837.0,837.0 836.7,822.2"/><polygon points="-2.3,873.9 11.9,873.8 26.1,873.7 40.3,873.6 41.0,888.1 41.6,902.6 42.3,917.1 28.1,917.2 13.9,917.3 -0.2,917.3 -0.9,902.9 -1.6,888.4"/><polygon points="83.3,873.1 97.7,873.0 112.2,872.8 126.6,872.6 127.3,887.2 127.9,901.8 128.5,916.4 114.1,916.5 99.7,916.7 85.3,916.8 84.6,902.3 83.9,887.7"/><polygon points="170.3,871.9 184.9,871.7 199.6,871.5 214.3,871.2 214.8,885.9 215.4,900.6 216.0,915.2 201.4,915.4 186.7,915.6 172.1,915.8 171.5,901.2 170.9,886.6"/><polygon points="258.4,870.4 273.2,870.1 288.0,869.8 302.8,869.4 303.4,884.2 303.9,898.9 304.4,913.6 289.7,913.9 274.9,914.2 260.1,914.4 259.6,899.8 259.0,885.1"/><polygon points="347.4,868.4 362.2,868.1 377.1,867.7 392.0,867.3 392.5,882.1 393.0,896.8 393.5,911.6 378.6,911.9 363.8,912.3 348.9,912.6 348.4,897.9 347.9,883.2"/><polygon points="436.8,866.1 451.7,865.7 466.6,865.3 481.6,864.9 482.0,879.6 482.5,894.4 482.9,909.1 468.0,909.6 453.1,910.0 438.2,910.4 437.7,895.7 437.2,880.9"/><polygon points="526.4,863.5 541.3,863.0 556.2,862.5 571.2,862.0 571.6,876.8 572.0,891.6 572.4,906.3 557.5,906.8 542.6,907.3 527.7,907.8 527.3,893.0 526.8,878.3"/><polygon points="615.9,860.5 630.8,860.0 645.7,859.4 660.5,858.9 660.9,873.7 661.3,888.4 661.6,903.1 646.8,903.7 631.9,904.2 617.1,904.8 616.7,890.0 616.3,875.3"/><polygon points="705.0,857.2 719.8,856.6 734.6,856.0 749.3,855.4 749.7,870.2 750.0,884.9 750.3,899.5 735.6,900.1 720.8,900.8 706.0,901.4 705.7,886.7 705.4,872.0"/><polygon points="793.4,853.6 808.1,852.9 822.7,852.3 837.3,851.6 837.5,866.3 837.8,881.0 838.1,895.6 823.5,896.3 808.9,896.9 794.3,897.6 794.0,882.9 793.7,868.3"/><polygon points="393.7,521.0 418.9,520.2 444.2,519.4 469.4,518.6 494.7,517.9 519.9,517.1 545.2,516.3 570.4,515.6 595.6,514.8 595.7,517.5 595.8,520.3 595.9,523.0 596.0,525.8 596.1,528.5 596.2,531.3 596.3,534.0 596.4,536.8 571.1,537.5 545.9,538.3 520.6,539.1 495.4,539.8 470.1,540.6 444.9,541.4 419.6,542.2 394.4,542.9 394.3,540.2 394.2,537.4 394.1,534.7 394.1,531.9 394.0,529.2 393.9,526.5 393.8,523.7"/><polygon points="438.6,563.6 442.5,563.5 446.5,563.3 450.5,563.2 454.4,563.1 458.4,563.0 462.4,562.9 462.9,581.6 463.5,600.3 464.1,619.0 464.7,637.7 465.2,656.5 465.8,675.2 461.8,675.3 457.9,675.4 453.9,675.5 449.9,675.6 446.0,675.8 442.0,675.9 441.4,657.2 440.8,638.4 440.3,619.7 439.7,601.0 439.1,582.3"/></g></g>
<path d="M19.3 48.5h13M25.8 42.0v13M61.2 45.7h13M67.7 39.2v13M103.4 43.1h13M109.9 36.6v13M145.9 40.6h13M152.4 34.1v13M188.7 38.2h13M195.2 31.7v13M231.8 36.0h13M238.3 29.5v13M275.1 33.9h13M281.6 27.4v13M318.5 32.0h13M325.0 25.5v13M362.0 30.2h13M368.5 23.7v13M405.7 28.6h13M412.2 22.1v13M449.4 27.1h13M455.9 20.6v13M493.1 25.8h13M499.6 19.3v13M536.8 24.6h13M543.3 18.1v13M580.5 23.5h13M587.0 17.0v13M624.1 22.7h13M630.6 16.2v13M667.5 21.9h13M674.0 15.4v13M710.8 21.4h13M717.3 14.9v13M753.8 21.0h13M760.3 14.5v13M18.9 89.7h13M25.4 83.2v13M60.9 87.0h13M67.4 80.5v13M103.3 84.5h13M109.8 78.0v13M146.0 82.1h13M152.5 75.6v13M189.0 79.8h13M195.5 73.3v13M232.2 77.7h13M238.7 71.2v13M275.7 75.7h13M282.2 69.2v13M319.3 73.8h13M325.8 67.3v13M363.0 72.0h13M369.5 65.5v13M406.8 70.4h13M413.3 63.9v13M450.7 68.9h13M457.2 62.4v13M494.6 67.6h13M501.1 61.1v13M538.4 66.4h13M544.9 59.9v13M582.3 65.3h13M588.8 58.8v13M626.0 64.4h13M632.5 57.9v13M669.6 63.6h13M676.1 57.1v13M713.0 63.0h13M719.5 56.5v13M756.3 62.5h13M762.8 56.0v13M18.6 131.4h13M25.1 124.9v13M60.8 128.8h13M67.3 122.3v13M103.3 126.4h13M109.8 119.9v13M146.2 124.1h13M152.7 117.6v13M189.3 121.9h13M195.8 115.4v13M232.7 119.8h13M239.2 113.3v13M276.3 117.9h13M282.8 111.4v13M320.1 116.0h13M326.6 109.5v13M364.0 114.3h13M370.5 107.8v13M407.9 112.7h13M414.4 106.2v13M452.0 111.2h13M458.5 104.7v13M496.0 109.9h13M502.5 103.4v13M540.0 108.7h13M546.5 102.2v13M584.0 107.6h13M590.5 101.1v13M627.9 106.6h13M634.4 100.1v13M671.6 105.8h13M678.1 99.3v13M715.2 105.1h13M721.7 98.6v13M758.6 104.5h13M765.1 98.0v13M18.4 173.4h13M24.9 166.9v13M60.8 171.0h13M67.3 164.5v13M103.5 168.7h13M110.0 162.2v13M146.5 166.5h13M153.0 160.0v13M189.8 164.4h13M196.3 157.9v13M233.3 162.4h13M239.8 155.9v13M277.0 160.5h13M283.5 154.0v13M320.9 158.7h13M327.4 152.2v13M365.0 157.0h13M371.5 150.5v13M409.1 155.4h13M415.6 148.9v13M453.3 154.0h13M459.8 147.5v13M497.4 152.6h13M503.9 146.1v13M541.6 151.4h13M548.1 144.9v13M585.7 150.3h13M592.2 143.8v13M629.8 149.2h13M636.3 142.7v13M673.7 148.4h13M680.2 141.9v13M717.4 147.6h13M723.9 141.1v13M760.9 146.9h13M767.4 140.4v13M18.4 215.9h13M24.9 209.4v13M60.9 213.6h13M67.4 207.1v13M103.7 211.4h13M110.2 204.9v13M146.9 209.3h13M153.4 202.8v13M190.3 207.2h13M196.8 200.7v13M234.0 205.3h13M240.5 198.8v13M277.8 203.5h13M284.3 197.0v13M321.9 201.7h13M328.4 195.2v13M366.0 200.1h13M372.5 193.6v13M410.3 198.5h13M416.8 192.0v13M454.6 197.1h13M461.1 190.6v13M498.9 195.7h13M505.4 189.2v13M543.2 194.5h13M549.7 188.0v13M587.4 193.3h13M593.9 186.8v13M631.6 192.3h13M638.1 185.8v13M675.6 191.3h13M682.1 184.8v13M719.5 190.5h13M726.0 184.0v13M763.1 189.7h13M769.6 183.2v13M18.5 258.7h13M25.0 252.2v13M61.1 256.5h13M67.6 250.0v13M104.1 254.4h13M110.6 247.9v13M147.4 252.4h13M153.9 245.9v13M190.9 250.5h13M197.4 244.0v13M234.7 248.6h13M241.2 242.1v13M278.7 246.8h13M285.2 240.3v13M322.8 245.1h13M329.3 238.6v13M367.1 243.5h13M373.6 237.0v13M411.5 242.0h13M418.0 235.5v13M455.9 240.5h13M462.4 234.0v13M500.3 239.2h13M506.8 232.7v13M544.7 237.9h13M551.2 231.4v13M589.1 236.7h13M595.6 230.2v13M633.4 235.6h13M639.9 229.1v13M677.5 234.6h13M684.0 228.1v13M721.5 233.7h13M728.0 227.2v13M765.3 232.9h13M771.8 226.4v13M18.8 301.8h13M25.3 295.3v13M61.5 299.8h13M68.0 293.3v13M104.6 297.8h13M111.1 291.3v13M148.0 295.8h13M154.5 289.3v13M191.6 294.0h13M198.1 287.5v13M235.5 292.2h13M242.0 285.7v13M279.6 290.5h13M286.1 284.0v13M323.8 288.8h13M330.3 282.3v13M368.2 287.2h13M374.7 280.7v13M412.7 285.7h13M419.2 279.2v13M457.2 284.3h13M463.7 277.8v13M501.8 282.9h13M508.3 276.4v13M546.3 281.7h13M552.8 275.2v13M590.8 280.4h13M597.3 273.9v13M635.1 279.3h13M641.6 272.8v13M679.4 278.3h13M685.9 271.8v13M723.4 277.3h13M729.9 270.8v13M767.3 276.4h13M773.8 269.9v13M19.2 345.2h13M25.7 338.7v13M62.0 343.3h13M68.5 336.8v13M105.2 341.4h13M111.7 334.9v13M148.6 339.6h13M155.1 333.1v13M192.4 337.8h13M198.9 331.3v13M236.4 336.1h13M242.9 329.6v13M280.6 334.4h13M287.1 327.9v13M324.9 332.8h13M331.4 326.3v13M369.4 331.3h13M375.9 324.8v13M414.0 329.8h13M420.5 323.3v13M458.6 328.3h13M465.1 321.8v13M503.2 327.0h13M509.7 320.5v13M547.8 325.7h13M554.3 319.2v13M592.4 324.4h13M598.9 317.9v13M636.8 323.3h13M643.3 316.8v13M681.2 322.2h13M687.7 315.7v13M725.3 321.1h13M731.8 314.6v13M769.3 320.2h13M775.8 313.7v13M19.7 388.8h13M26.2 382.3v13M62.6 387.0h13M69.1 380.5v13M105.8 385.2h13M112.3 378.7v13M149.4 383.5h13M155.9 377.0v13M193.2 381.8h13M199.7 375.3v13M237.3 380.2h13M243.8 373.7v13M281.6 378.6h13M288.1 372.1v13M326.0 377.0h13M332.5 370.5v13M370.6 375.5h13M377.1 369.0v13M415.2 374.0h13M421.7 367.5v13M459.9 372.6h13M466.4 366.1v13M504.6 371.2h13M511.1 364.7v13M549.3 369.9h13M555.8 363.4v13M594.0 368.7h13M600.5 362.2v13M638.5 367.5h13M645.0 361.0v13M682.9 366.3h13M689.4 359.8v13M727.2 365.2h13M733.7 358.7v13M771.2 364.2h13M777.7 357.7v13M20.3 432.7h13M26.8 426.2v13M63.3 431.0h13M69.8 424.5v13M106.6 429.3h13M113.1 422.8v13M150.3 427.6h13M156.8 421.1v13M194.2 426.0h13M200.7 419.5v13M238.3 424.5h13M244.8 418.0v13M282.7 422.9h13M289.2 416.4v13M327.2 421.4h13M333.7 414.9v13M371.8 419.9h13M378.3 413.4v13M416.5 418.5h13M423.0 412.0v13M461.3 417.1h13M467.8 410.6v13M506.1 415.7h13M512.6 409.2v13M550.8 414.4h13M557.3 407.9v13M595.5 413.1h13M602.0 406.6v13M640.2 411.8h13M646.7 405.3v13M684.6 410.6h13M691.1 404.1v13M729.0 409.5h13M735.5 403.0v13M773.1 408.4h13M779.6 401.9v13M21.1 476.6h13M27.6 470.1v13M64.2 475.1h13M70.7 468.6v13M107.5 473.5h13M114.0 467.0v13M151.2 472.0h13M157.7 465.5v13M195.2 470.4h13M201.7 463.9v13M239.4 468.9h13M245.9 462.4v13M283.8 467.4h13M290.3 460.9v13M328.4 466.0h13M334.9 459.5v13M373.1 464.5h13M379.6 458.0v13M417.8 463.1h13M424.3 456.6v13M462.6 461.7h13M469.1 455.2v13M507.5 460.3h13M514.0 453.8v13M552.3 459.0h13M558.8 452.5v13M597.1 457.7h13M603.6 451.2v13M641.7 456.4h13M648.2 449.9v13M686.3 455.2h13M692.8 448.7v13M730.7 453.9h13M737.2 447.4v13M774.8 452.7h13M781.3 446.2v13M22.0 520.7h13M28.5 514.2v13M65.1 519.3h13M71.6 512.8v13M108.5 517.8h13M115.0 511.3v13M152.3 516.4h13M158.8 509.9v13M196.3 514.9h13M202.8 508.4v13M240.5 513.5h13M247.0 507.0v13M285.0 512.1h13M291.5 505.6v13M329.6 510.7h13M336.1 504.2v13M374.3 509.3h13M380.8 502.8v13M598.6 502.4h13M605.1 495.9v13M643.3 501.1h13M649.8 494.6v13M687.9 499.8h13M694.4 493.3v13M732.3 498.5h13M738.8 492.0v13M776.5 497.2h13M783.0 490.7v13M23.1 564.9h13M29.6 558.4v13M66.2 563.6h13M72.7 557.1v13M109.6 562.3h13M116.1 555.8v13M153.4 560.9h13M159.9 554.4v13M197.5 559.5h13M204.0 553.0v13M241.8 558.2h13M248.3 551.7v13M286.2 556.8h13M292.7 550.3v13M330.9 555.4h13M337.4 548.9v13M375.6 554.1h13M382.1 547.6v13M600.1 547.2h13M606.6 540.7v13M644.8 545.9h13M651.3 539.4v13M689.4 544.5h13M695.9 538.0v13M733.9 543.2h13M740.4 536.7v13M778.1 541.8h13M784.6 535.3v13M24.2 609.2h13M30.7 602.7v13M67.4 608.0h13M73.9 601.5v13M110.8 606.7h13M117.3 600.2v13M154.6 605.5h13M161.1 599.0v13M198.7 604.2h13M205.2 597.7v13M243.0 602.9h13M249.5 596.4v13M287.5 601.6h13M294.0 595.1v13M332.2 600.3h13M338.7 593.8v13M377.0 599.0h13M383.5 592.5v13M556.6 593.5h13M563.1 587.0v13M601.5 592.1h13M608.0 585.6v13M646.3 590.7h13M652.8 584.2v13M690.9 589.3h13M697.4 582.8v13M735.4 587.9h13M741.9 581.4v13M779.6 586.5h13M786.1 580.0v13M25.5 653.4h13M32.0 646.9v13M68.6 652.3h13M75.1 645.8v13M112.1 651.2h13M118.6 644.7v13M156.0 650.1h13M162.5 643.6v13M200.0 648.9h13M206.5 642.4v13M244.4 647.7h13M250.9 641.2v13M288.9 646.4h13M295.4 639.9v13M333.5 645.1h13M340.0 638.6v13M378.3 643.8h13M384.8 637.3v13M513.1 639.8h13M519.6 633.3v13M558.0 638.4h13M564.5 631.9v13M602.9 637.0h13M609.4 630.5v13M647.7 635.6h13M654.2 629.1v13M692.3 634.1h13M698.8 627.6v13M736.8 632.7h13M743.3 626.2v13M781.1 631.2h13M787.6 624.7v13M26.9 697.7h13M33.4 691.2v13M70.0 696.7h13M76.5 690.2v13M113.5 695.7h13M120.0 689.2v13M157.4 694.6h13M163.9 688.1v13M201.4 693.5h13M207.9 687.0v13M245.7 692.4h13M252.2 685.9v13M290.3 691.2h13M296.8 684.7v13M334.9 690.0h13M341.4 683.5v13M379.7 688.7h13M386.2 682.2v13M424.6 687.4h13M431.1 680.9v13M469.5 686.1h13M476.0 679.6v13M514.5 684.7h13M521.0 678.2v13M559.4 683.3h13M565.9 676.8v13M604.3 681.9h13M610.8 675.4v13M649.1 680.4h13M655.6 673.9v13M693.7 678.9h13M700.2 672.4v13M738.2 677.4h13M744.7 670.9v13M782.4 675.8h13M788.9 669.3v13M28.4 741.8h13M34.9 735.3v13M71.6 741.0h13M78.1 734.5v13M115.0 740.1h13M121.5 733.6v13M158.8 739.1h13M165.3 732.6v13M202.9 738.1h13M209.4 731.6v13M247.2 737.1h13M253.7 730.6v13M291.7 735.9h13M298.2 729.4v13M336.4 734.8h13M342.9 728.3v13M381.1 733.5h13M387.6 727.0v13M426.0 732.3h13M432.5 725.8v13M470.9 731.0h13M477.4 724.5v13M515.9 729.6h13M522.4 723.1v13M560.8 728.2h13M567.3 721.7v13M605.6 726.7h13M612.1 720.2v13M650.4 725.2h13M656.9 718.7v13M695.0 723.7h13M701.5 717.2v13M739.4 722.1h13M745.9 715.6v13M783.7 720.4h13M790.2 713.9v13M30.1 785.9h13M36.6 779.4v13M73.2 785.2h13M79.7 778.7v13M116.6 784.4h13M123.1 777.9v13M160.4 783.6h13M166.9 777.1v13M204.4 782.6h13M210.9 776.1v13M248.7 781.6h13M255.2 775.1v13M293.2 780.6h13M299.7 774.1v13M337.8 779.5h13M344.3 773.0v13M382.6 778.3h13M389.1 771.8v13M427.4 777.0h13M433.9 770.5v13M472.3 775.7h13M478.8 769.2v13M517.2 774.4h13M523.7 767.9v13M562.1 772.9h13M568.6 766.4v13M606.9 771.5h13M613.4 765.0v13M651.6 769.9h13M658.1 763.4v13M696.2 768.3h13M702.7 761.8v13M740.6 766.7h13M747.1 760.2v13M784.8 765.0h13M791.3 758.5v13M31.9 829.8h13M38.4 823.3v13M74.9 829.3h13M81.4 822.8v13M118.3 828.6h13M124.8 822.1v13M162.1 827.8h13M168.6 821.3v13M206.1 827.0h13M212.6 820.5v13M250.3 826.1h13M256.8 819.6v13M294.7 825.1h13M301.2 818.6v13M339.3 824.0h13M345.8 817.5v13M384.0 822.9h13M390.5 816.4v13M428.8 821.7h13M435.3 815.2v13M473.7 820.4h13M480.2 813.9v13M518.6 819.0h13M525.1 812.5v13M563.4 817.6h13M569.9 811.1v13M608.2 816.1h13M614.7 809.6v13M652.9 814.5h13M659.4 808.0v13M697.4 812.8h13M703.9 806.3v13M741.8 811.1h13M748.3 804.6v13M785.9 809.4h13M792.4 802.9v13M33.8 873.6h13M40.3 867.1v13M76.8 873.1h13M83.3 866.6v13M120.1 872.6h13M126.6 866.1v13M163.8 871.9h13M170.3 865.4v13M207.8 871.2h13M214.3 864.7v13M251.9 870.4h13M258.4 863.9v13M296.3 869.4h13M302.8 862.9v13M340.9 868.4h13M347.4 861.9v13M385.5 867.3h13M392.0 860.8v13M430.3 866.1h13M436.8 859.6v13M475.1 864.9h13M481.6 858.4v13M519.9 863.5h13M526.4 857.0v13M564.7 862.0h13M571.2 855.5v13M609.4 860.5h13M615.9 854.0v13M654.0 858.9h13M660.5 852.4v13M698.5 857.2h13M705.0 850.7v13M742.8 855.4h13M749.3 848.9v13M786.9 853.6h13M793.4 847.1v13" stroke="#e81ce8" stroke-width="1.7" fill="none"/>
<text x="12.4" y="26.8" font-family="Liberation Sans" font-size="15" font-weight="bold" fill="#ffff00">Training CheckerboardEfficient calibration ...</text><text x="12.4" y="47.4" font-family="Liberation Sans" font-size="15" font-weight="bold" fill="#00ff00">CheckerboardEfficient calibration is trained</text>
</svg>

<svg class="ic" style="left:0;top:0;pointer-events:none" width="1445" height="1080">
<g fill="none" stroke="#000" stroke-width="2" stroke-linejoin="round" stroke-linecap="round">
<!-- toolbar 1 -->
<rect x="13" y="7" width="18.5" height="18.5" rx="2.5" fill="#d4d4d4"/>
<circle cx="22.2" cy="11.8" r="1.1" fill="#000" stroke="none"/>
<path d="M22.2 15v6"/>
<path d="M53 8a2 2 0 0 1 2-2h9l5.5 5.5v14a1.5 1.5 0 0 1-1.5 1.5h-13a2 2 0 0 1-2-2z" fill="#ababab"/>
<path d="M64 6v5.5h5.5z" fill="#000"/>
<path d="M85.5 8a2 2 0 0 1 2-2h8.5l6 6v9" stroke-width="1.6"/>
<path d="M85.5 8v17a2 2 0 0 0 2 2h12.5" stroke-width="1.6"/>
<path d="M95.5 6.5v5.5h6" stroke-width="1.5"/>
<path d="M103.5 28.5v-8M100.5 23l3-3 3 3" stroke-width="1.6"/>
<path d="M116.5 8.5a2 2 0 0 1 2-2h13.5l4 4v14.5a2 2 0 0 1-2 2h-15.5a2 2 0 0 1-2-2z" fill="#000"/>
<rect x="118" y="8.5" width="10.5" height="4.5" fill="#fff" stroke="none"/>
<circle cx="125.8" cy="21" r="3.4" fill="#fff" stroke="none"/>
<!-- copy -->
<path d="M161 9v-2.5a1.5 1.5 0 0 1 1.5-1.5h7.5l4.5 4.5v12.5a1.5 1.5 0 0 1-1.5 1.5h-1.5" stroke-width="1.8"/>
<path d="M156.5 10.5a1.5 1.5 0 0 1 1.5-1.5h7l4.5 4.5v12.5a1.5 1.5 0 0 1-1.5 1.5h-10a1.5 1.5 0 0 1-1.5-1.5z" fill="#fff" stroke-width="1.8"/>
<path d="M165 9v4.5h4.5z" fill="#000" stroke-width="1.2"/>
<!-- cut -->
<path d="M200 11v-3a1.5 1.5 0 0 0-1.5-1.5h-10a1.5 1.5 0 0 0-1.5 1.5v17a1.5 1.5 0 0 0 1.5 1.5h10a1.5 1.5 0 0 0 1.5-1.5v-4" stroke-width="1.8"/>
<path d="M189.5 16.5h8" stroke-width="1.2" stroke-dasharray="1.2 1.6"/>
<path d="M197 11l7.5 8.5M204.5 13.5l-4 3.5" stroke-width="1.5"/>
<circle cx="206.8" cy="12.5" r="2.4" stroke-width="1.8"/>
<circle cx="206.8" cy="20.5" r="2.4" stroke-width="1.8"/>
<!-- paste -->
<path d="M227 8h-4.5a1 1 0 0 0-1 1v16.5a1 1 0 0 0 1 1h5M232 8h4.5a1 1 0 0 1 1 1v6" stroke-width="1.8"/>
<path d="M225 7.5h9.5v3h-9.5z" stroke-width="1.6"/>
<path d="M229.8 5l2 2.5h-4z" fill="#000" stroke-width="1"/>
<rect x="228.5" y="15.5" width="10" height="12" rx="1" fill="#fff" stroke-width="1.8"/>
<!-- trash -->
<path d="M260 6h18.5l-2 19a1.5 1.5 0 0 1-1.5 1.5h-11.5a1.5 1.5 0 0 1-1.5-1.5z" fill="#a3a3a3" stroke="none"/>
<path d="M262 23.2h14.5l-0.3 2.5a1.5 1.5 0 0 1-1.5 1h-11a1.5 1.5 0 0 1-1.5-1z" fill="#000" stroke="none"/>
<!-- toolbar 2 -->
<path d="M12.5 61.5l19.5-19.5" stroke-width="2.2"/>
<path d="M50 41h8v7.5h7.5v8h-7.5v7.5h-8v-7.5h-7.5v-8h7.5z" fill="#fff" stroke-width="2"/>
<circle cx="86.7" cy="52" r="10.3" stroke-width="2"/>
<path d="M122.1 41.8L123.4 43.9L127.3 44.3L130.8 48.1L128.4 49.9L129.3 53.5L127 55.3L127.6 58.8L130.2 59.1L126.7 61.2L121.3 61.5L119.6 62.7L114.2 58.8L110.1 61.5L107.4 58.5L108.3 55.6L107.4 50.8L112.4 50.5L111.6 47.9L109.5 46.4L111.9 44.9L116 45.2L117.5 49.9Z" stroke-width="2" fill="none"/>
<path d="M148 49.5v-3.5a2.5 2.5 0 0 1-2.5-2.5a1.5 1.5 0 0 1 1.5-1.5h9a1.5 1.5 0 0 1 1.5 1.5a2.5 2.5 0 0 1-2.5 2.5v3.5" stroke-width="1.8"/>
<rect x="141" y="51" width="21.5" height="10.5" rx="2" stroke-width="2"/>
<circle cx="147.5" cy="56.5" r="1" fill="#000" stroke="none"/><circle cx="151.8" cy="56.5" r="1" fill="#000" stroke="none"/><circle cx="156" cy="56.5" r="1" fill="#000" stroke="none"/>
</g>
<!-- datamatrix -->
<g fill="#000"><rect x="185.10" y="41.90" width="2.35" height="2.35"/><rect x="189.70" y="41.90" width="2.35" height="2.35"/><rect x="192.00" y="41.90" width="2.35" height="2.35"/><rect x="194.30" y="41.90" width="2.35" height="2.35"/><rect x="196.60" y="41.90" width="2.35" height="2.35"/><rect x="201.20" y="41.90" width="2.35" height="2.35"/><rect x="203.50" y="41.90" width="2.35" height="2.35"/><rect x="185.10" y="44.20" width="2.35" height="2.35"/><rect x="187.40" y="44.20" width="2.35" height="2.35"/><rect x="192.00" y="44.20" width="2.35" height="2.35"/><rect x="198.90" y="44.20" width="2.35" height="2.35"/><rect x="203.50" y="44.20" width="2.35" height="2.35"/><rect x="185.10" y="46.50" width="2.35" height="2.35"/><rect x="189.70" y="46.50" width="2.35" height="2.35"/><rect x="194.30" y="46.50" width="2.35" height="2.35"/><rect x="196.60" y="46.50" width="2.35" height="2.35"/><rect x="201.20" y="46.50" width="2.35" height="2.35"/><rect x="185.10" y="48.80" width="2.35" height="2.35"/><rect x="187.40" y="48.80" width="2.35" height="2.35"/><rect x="192.00" y="48.80" width="2.35" height="2.35"/><rect x="196.60" y="48.80" width="2.35" height="2.35"/><rect x="201.20" y="48.80" width="2.35" height="2.35"/><rect x="185.10" y="51.10" width="2.35" height="2.35"/><rect x="187.40" y="51.10" width="2.35" height="2.35"/><rect x="194.30" y="51.10" width="2.35" height="2.35"/><rect x="201.20" y="51.10" width="2.35" height="2.35"/><rect x="203.50" y="51.10" width="2.35" height="2.35"/><rect x="185.10" y="53.40" width="2.35" height="2.35"/><rect x="192.00" y="53.40" width="2.35" height="2.35"/><rect x="198.90" y="53.40" width="2.35" height="2.35"/><rect x="185.10" y="55.70" width="2.35" height="2.35"/><rect x="189.70" y="55.70" width="2.35" height="2.35"/><rect x="192.00" y="55.70" width="2.35" height="2.35"/><rect x="196.60" y="55.70" width="2.35" height="2.35"/><rect x="201.20" y="55.70" width="2.35" height="2.35"/><rect x="203.50" y="55.70" width="2.35" height="2.35"/><rect x="185.10" y="58.00" width="2.35" height="2.35"/><rect x="187.40" y="58.00" width="2.35" height="2.35"/><rect x="192.00" y="58.00" width="2.35" height="2.35"/><rect x="198.90" y="58.00" width="2.35" height="2.35"/><rect x="185.10" y="60.30" width="2.35" height="2.35"/><rect x="187.40" y="60.30" width="2.35" height="2.35"/><rect x="189.70" y="60.30" width="2.35" height="2.35"/><rect x="192.00" y="60.30" width="2.35" height="2.35"/><rect x="194.30" y="60.30" width="2.35" height="2.35"/><rect x="196.60" y="60.30" width="2.35" height="2.35"/><rect x="198.90" y="60.30" width="2.35" height="2.35"/><rect x="201.20" y="60.30" width="2.35" height="2.35"/><rect x="203.50" y="60.30" width="2.35" height="2.35"/></g>
<rect x="227" y="43.2" width="24" height="18" rx="3.5" fill="#a0a0a0"/>
<text x="239" y="55.8" font-family="Liberation Sans" font-size="9.5" font-weight="bold" fill="#e8e8e8" text-anchor="middle">Ctrl</text>
<path d="M255 51.5h6l-3 3z" fill="#999"/>

<!-- left tabs -->
<g fill="none" stroke="#000" stroke-width="2" stroke-linejoin="round">
<rect x="12.5" y="81.5" width="8" height="5" rx="0.5"/>
<rect x="24.5" y="89.5" width="8" height="4.8" rx="0.5"/>
<rect x="24.5" y="98.5" width="8" height="4.8" rx="0.5"/>
<path d="M17 86.5v14.5h7.5M17 92h7.5"/>
</g>
<path d="M101 85.5a2 2 0 0 1 2-2h3.5l1.5-3.5h7.5l1.5 3.5h3.5a2 2 0 0 1 2 2v11.5a2 2 0 0 1-2 2h-17.5a2 2 0 0 1-2-2z" fill="#000"/>
<circle cx="112.3" cy="90.8" r="4.3" fill="none" stroke="#fff" stroke-width="2.2"/>
<!-- camera buttons icons -->
<rect x="40.5" y="130" width="22" height="17.5" fill="#e8e8e8" stroke="#d0d0d0" stroke-width="1"/>
<rect x="45" y="134.5" width="13" height="9" fill="#fff" stroke="#000" stroke-width="2.2"/>
<rect x="119.5" y="128.5" width="20.5" height="20.5" rx="3" fill="#000"/>
<g fill="#fff">
<rect x="121.8" y="130.8" width="4.3" height="4.3"/><rect x="127.6" y="130.8" width="4.3" height="4.3"/><rect x="133.4" y="130.8" width="4.3" height="4.3"/>
<rect x="127.6" y="136.6" width="4.3" height="4.3"/><rect x="133.4" y="136.6" width="4.3" height="4.3"/>
<rect x="121.8" y="142.4" width="4.3" height="4.3"/><rect x="127.6" y="142.4" width="4.3" height="4.3"/><rect x="133.4" y="142.4" width="4.3" height="4.3"/>
</g>
<g fill="none" stroke="#000">
<circle cx="209.2" cy="138.6" r="11.5" stroke-width="2.2" stroke-dasharray="1.9 1.8"/>
<circle cx="209.2" cy="138.6" r="6.8" stroke-width="2"/>
<circle cx="209.2" cy="138.6" r="2.6" stroke-width="2"/>
</g>
<!-- sub tab icons -->
<rect x="17.8" y="199.3" width="18.5" height="18.5" rx="2.5" fill="#d9d9d9" stroke="#000" stroke-width="2.4"/>
<circle cx="27" cy="208.3" r="5.8" fill="#fff" stroke="#000" stroke-width="2"/>
<path d="M27 205.5v3h2.5" stroke="#000" stroke-width="1.3" fill="none"/>
<path d="M72.5 201.5a3.5 3.5 0 0 1 3.5-3.5h14a3.5 3.5 0 0 1 3.5 3.5v12.5a2 2 0 0 1-2 2h-6l-2 2.5-2-2.5h-6.5a2 2 0 0 1-2-2z" fill="#cdcdcd"/>
<path d="M72.5 202a3.5 3.5 0 0 1 3.5-3.5h14a3.5 3.5 0 0 1 3.5 3.5v0.5h-21z" fill="#000"/>
<g fill="#000"><circle cx="76.8" cy="206.8" r="1.1"/><circle cx="76.8" cy="211.5" r="1.1"/><rect x="79.5" y="205.8" width="9.5" height="2" rx="0.8"/><rect x="79.5" y="210.5" width="9.5" height="2" rx="0.8"/></g>
<rect x="125" y="197.5" width="26" height="15.5" rx="2.5" fill="none" stroke="#000" stroke-width="2.2"/>
<rect x="133.5" y="213" width="8.5" height="2.5" fill="#000"/>
<rect x="181.8" y="199.2" width="23" height="16" rx="2.5" fill="none" stroke="#000" stroke-width="2.2"/>
<rect x="189.5" y="215.5" width="8.5" height="2.3" fill="#000"/>
<g fill="#000"><rect x="185.2" y="202.8" width="6.8" height="2.6" rx="0.5"/><rect x="194.3" y="202.8" width="7" height="2.6" rx="0.5"/><rect x="185.2" y="208.3" width="6.8" height="2.6" rx="0.5"/><rect x="194.3" y="208.3" width="7" height="2.6" rx="0.5"/></g>
<!-- left toolbar icons -->
<g fill="none" stroke="#000" stroke-width="2" stroke-linejoin="round" stroke-linecap="round">
<path d="M20 245a2 2 0 0 1 2-2h8.5l5.5 5.5v13.5a1.5 1.5 0 0 1-1.5 1.5h-12.5a2 2 0 0 1-2-2z" fill="#ababab"/>
<path d="M30.5 243v5.5h5.5z" fill="#000"/>
<path d="M52.5 245a2 2 0 0 1 2-2h8l6 6v9" stroke-width="1.6"/>
<path d="M52.5 245v17.5a2 2 0 0 0 2 2h12.5" stroke-width="1.6"/>
<path d="M62.5 243.5v5.5h6" stroke-width="1.5"/>
<path d="M69.8 265.5v-8M66.8 260l3-3 3 3" stroke-width="1.6"/>
<path d="M83.2 246a2 2 0 0 1 2-2h13l4 4v13.5a2 2 0 0 1-2 2h-15a2 2 0 0 1-2-2z" fill="#000"/>
</g>
<rect x="85" y="246" width="10.5" height="4.2" fill="#fff"/>
<circle cx="92.5" cy="257.5" r="3.3" fill="#fff"/>
<rect x="131.8" y="243.8" width="20.5" height="19" rx="2" fill="#fff" stroke="#000" stroke-width="2.2"/>
<rect x="133.2" y="245.2" width="9" height="6.5" fill="#a3a3a3"/>
<path d="M133 253.5h10.5v-8.5M133 257.5h14.5v-12.5" fill="none" stroke="#000" stroke-width="1.8"/>
<defs><pattern id="chk" width="4.2" height="4.2" patternUnits="userSpaceOnUse" x="164.3" y="243"><rect width="2.1" height="2.1" fill="#000"/><rect x="2.1" y="2.1" width="2.1" height="2.1" fill="#000"/></pattern></defs>
<rect x="164.3" y="243" width="21" height="21" fill="url(#chk)"/>
<!-- property toolbar icons (left) -->
<g id="cat">
<rect x="14.8" y="282" width="7" height="7" rx="1.5" fill="#fff" stroke="#6cc9bf" stroke-width="1"/>
<rect x="14.8" y="292.4" width="7" height="7" rx="1.5" fill="#fff" stroke="#6cc9bf" stroke-width="1"/>
<circle cx="18.3" cy="285.5" r="1.6" fill="#000"/><circle cx="18.3" cy="295.9" r="1.6" fill="#000"/>
<rect x="23.5" y="283.5" width="4" height="1.2" fill="#333"/><rect x="23.5" y="294" width="4" height="1.2" fill="#333"/>
<g fill="#8fd0e8"><rect x="24" y="286.5" width="3" height="1"/><rect x="28.5" y="286.5" width="3" height="1"/><rect x="24" y="289" width="3" height="1"/><rect x="28.5" y="289" width="3" height="1"/><rect x="24" y="297" width="3" height="1"/><rect x="28.5" y="297" width="3" height="1"/><rect x="28.5" y="284" width="3" height="1"/><rect x="28.5" y="291.5" width="3" height="1"/></g>
</g>
<text x="44.8" y="290.2" font-family="Liberation Serif" font-size="10" fill="#3b7fd4" text-anchor="middle">A</text>
<text x="44.8" y="299.5" font-family="Liberation Serif" font-size="10" fill="#b04a4a" text-anchor="middle">Z</text>
<path d="M55.3 282v15" stroke="#000" stroke-width="1.5"/><path d="M52.8 295l2.5 4.5 2.5-4.5z" fill="#000"/>
<rect x="74.6" y="282.5" width="18" height="16.5" fill="#e4e4e4" stroke="#bdbdbd" stroke-width="1.2"/>
<rect x="77" y="287" width="13" height="9" fill="none" stroke="#c8c8c8" stroke-width="1"/>

<!-- center tab icons -->
<rect x="334.5" y="81.5" width="22.5" height="18" rx="2.5" fill="#000"/>
<path d="M337 97v-5l5.5-4.5 6 6 2.5-2.5 3.5 3.5v2.5z" fill="#fff"/>
<circle cx="352.8" cy="85.7" r="1.6" fill="#fff"/>
<g fill="none" stroke="#000" stroke-linecap="round">
<circle cx="445.7" cy="90.3" r="8" stroke-width="2"/>
<path d="M451.5 96.2l6 5.8" stroke-width="2.6"/>
</g>
<g fill="#000"><circle cx="442.3" cy="90.3" r="0.9"/><circle cx="445.7" cy="90.3" r="0.9"/><circle cx="449.1" cy="90.3" r="0.9"/></g>
<text x="553.5" y="97.5" font-family="Liberation Sans" font-size="13.5" font-weight="bold" fill="#000" letter-spacing="-1">C#</text>
<!-- center toolbar -->
<g fill="none" stroke="#000" stroke-width="2.2" stroke-linejoin="round" stroke-linecap="round">
<rect x="337.3" y="118.3" width="11.8" height="20.5" rx="1.8" fill="#ababab"/>
<rect x="369.5" y="118.3" width="11.8" height="20.5" rx="1.8" fill="#ababab"/>
<circle cx="411.4" cy="124.8" r="7" stroke-width="2"/><path d="M416.5 130l8 8" stroke-width="2.6"/><path d="M408.3 124.8h6.2" stroke-width="2.2"/>
<circle cx="443.5" cy="124.8" r="7" stroke-width="2"/><path d="M448.6 130l8 8" stroke-width="2.6"/><path d="M440.4 124.8h6.2M443.5 121.7v6.2" stroke-width="2.2"/>
<circle cx="476.2" cy="125" r="7" stroke-width="2"/><path d="M481.3 130.2l8 8" stroke-width="2.6"/>
<path d="M539.5 128.5h9.5M553 128.5h9.5M551 117v9.5M551 131v9" stroke-width="2.8" stroke-linecap="butt"/>
<rect x="577.5" y="122.5" width="25.5" height="11.5" rx="2" stroke-width="2"/>
</g>
<path d="M331.5 128.3h10" stroke="#000" stroke-width="2.2"/><path d="M340 124.2l5 4.1-5 4.1z" fill="#000"/>
<path d="M374 128.3h10" stroke="#000" stroke-width="2.2"/><path d="M383.5 124.2l5 4.1-5 4.1z" fill="#000"/>
<g fill="#000"><circle cx="473" cy="121.8" r="0.8"/><circle cx="479.4" cy="121.8" r="0.8"/><circle cx="473" cy="128.2" r="0.8"/><circle cx="479.4" cy="128.2" r="0.8"/></g>
<rect x="500" y="119.3" width="23" height="18" rx="2" fill="#000"/>
<text x="511.5" y="132.5" font-family="Liberation Sans" font-size="11" font-weight="bold" fill="#fff" text-anchor="middle" letter-spacing="-0.5">1:1</text>
<path d="M581 123v3M585.3 123v4.5M589.7 123v3M594 123v4.5M598.5 123v3" stroke="#000" stroke-width="1.8"/>
<!-- center status icons -->
<rect x="339.5" y="1013.5" width="26" height="15.5" rx="2.5" fill="#000"/>
<g fill="#fff"><rect x="342.5" y="1016.3" width="20" height="1.5" fill="none"/>
<rect x="342.5" y="1016" width="1.6" height="1.6"/><rect x="345.5" y="1016" width="1.6" height="1.6"/><rect x="348.5" y="1016" width="1.6" height="1.6"/><rect x="351.5" y="1016" width="1.6" height="1.6"/><rect x="354.5" y="1016" width="1.6" height="1.6"/><rect x="357.5" y="1016" width="1.6" height="1.6"/><rect x="360.5" y="1016" width="1.6" height="1.6"/>
<rect x="342.5" y="1019.5" width="1.6" height="1.6"/><rect x="345.5" y="1019.5" width="1.6" height="1.6"/><rect x="348.5" y="1019.5" width="1.6" height="1.6"/><rect x="351.5" y="1019.5" width="1.6" height="1.6"/><rect x="354.5" y="1019.5" width="1.6" height="1.6"/><rect x="357.5" y="1019.5" width="1.6" height="1.6"/><rect x="360.5" y="1019.5" width="1.6" height="1.6"/>
<rect x="345.5" y="1023.5" width="14" height="1.8"/></g>
<path d="M424.5 1020.5h9l-4.5 4.5z" fill="#333"/>
<path d="M457.5 1014v16" stroke="#a8a8a8" stroke-width="2.4"/><path d="M454 1028l3.5 4.5 3.5-4.5z" fill="#a8a8a8"/>
<path d="M457.5 1013.5h16" stroke="#000" stroke-width="2.6"/><circle cx="457.5" cy="1013.5" r="2.3" fill="#000"/><path d="M472 1010l5 3.5-5 3.5z" fill="#000"/>
<path d="M611 1013v16" stroke="#a8a8a8" stroke-width="2.4"/><path d="M607.5 1015l3.5-4.5 3.5 4.5z" fill="#a8a8a8"/>
<path d="M611 1029.5h16" stroke="#000" stroke-width="2.6"/><circle cx="611" cy="1029.5" r="2.3" fill="#000"/><path d="M625.5 1026l5 3.5-5 3.5z" fill="#000"/>
<g fill="none" stroke="#000" stroke-linecap="round">
<circle cx="987.5" cy="1020.5" r="8.5" stroke-width="2"/><path d="M993.5 1026.5l5.5 5.5" stroke-width="2.6"/>
</g>
<g fill="#000"><circle cx="984" cy="1020.5" r="0.9"/><circle cx="987.5" cy="1020.5" r="0.9"/><circle cx="991" cy="1020.5" r="0.9"/></g>
<!-- right panel icons -->
<rect x="1137.2" y="81.2" width="19" height="18.2" rx="2.5" fill="none" stroke="#000" stroke-width="2.4"/>
<path d="M1137.5 84.8h18.5" stroke="#000" stroke-width="1.6"/>
<g fill="#000"><circle cx="1141.5" cy="90" r="1.1"/><circle cx="1141.5" cy="94.8" r="1.1"/><rect x="1144.2" y="88.9" width="8" height="2.2" rx="0.6"/><rect x="1144.2" y="93.7" width="8" height="2.2" rx="0.6"/></g>
<g transform="translate(1119.3,-167.6) scale(1,1)">
<rect x="14.8" y="282" width="7" height="7" rx="1.5" fill="#fff" stroke="#6cc9bf" stroke-width="1"/>
<rect x="14.8" y="292.4" width="7" height="7" rx="1.5" fill="#fff" stroke="#6cc9bf" stroke-width="1"/>
<circle cx="18.3" cy="285.5" r="1.6" fill="#000"/><circle cx="18.3" cy="295.9" r="1.6" fill="#000"/>
<rect x="23.5" y="283.5" width="4" height="1.2" fill="#333"/><rect x="23.5" y="294" width="4" height="1.2" fill="#333"/>
<g fill="#8fd0e8"><rect x="24" y="286.5" width="3" height="1"/><rect x="28.5" y="286.5" width="3" height="1"/><rect x="24" y="289" width="3" height="1"/><rect x="28.5" y="289" width="3" height="1"/><rect x="24" y="297" width="3" height="1"/><rect x="28.5" y="297" width="3" height="1"/><rect x="28.5" y="284" width="3" height="1"/><rect x="28.5" y="291.5" width="3" height="1"/></g>
<text x="44.8" y="290.2" font-family="Liberation Serif" font-size="10" fill="#3b7fd4" text-anchor="middle">A</text>
<text x="44.8" y="299.5" font-family="Liberation Serif" font-size="10" fill="#b04a4a" text-anchor="middle">Z</text>
<path d="M55.3 282v15" stroke="#000" stroke-width="1.5"/><path d="M52.8 295l2.5 4.5 2.5-4.5z" fill="#000"/>
<rect x="74.6" y="282.5" width="18" height="16.5" fill="#e4e4e4" stroke="#bdbdbd" stroke-width="1.2"/>
<rect x="77" y="287" width="13" height="9" fill="none" stroke="#c8c8c8" stroke-width="1"/>
</g>
<!-- bottom status icons -->
<g fill="none" stroke="#000" stroke-width="2.2" stroke-linejoin="round">
<path d="M14 1051.5h21v14h-21z"/>
</g>
<path d="M18 1052v3.5M22 1052v2.2M26 1052v3.5M30 1052v2.2" stroke="#000" stroke-width="1.6"/>
<path d="M24.5 1065.5v5.5M19.5 1072h10" stroke="#000" stroke-width="2.4"/>
<circle cx="125.4" cy="1062.5" r="9" fill="#a5a5a5" stroke="#000" stroke-width="2.2"/>
<path d="M125.4 1057v6" stroke="#000" stroke-width="2.2"/><path d="M121.5 1050.5h8" stroke="#000" stroke-width="2.2"/><path d="M132.5 1053.5l2 -2" stroke="#000" stroke-width="2"/>
<path d="M207.5 1051.5h11.5a2 2 0 0 1 2 2v17.5a2 2 0 0 1-2 2h-13a2 2 0 0 1-2-2v-15z" fill="none" stroke="#000" stroke-width="2.2" stroke-linejoin="round"/>
<path d="M210.5 1054v3M213.5 1054v3M216.5 1054v3" stroke="#000" stroke-width="1.5"/>
<rect x="1250.5" y="1053.5" width="14" height="17.5" rx="3" fill="#fff" stroke="#000" stroke-width="2.4"/>
<path d="M1254 1057.5h7M1254 1060.5h7M1254 1063.5h7M1254 1066.5h7" stroke="#000" stroke-width="1.2"/>
</svg>

</body></html>
